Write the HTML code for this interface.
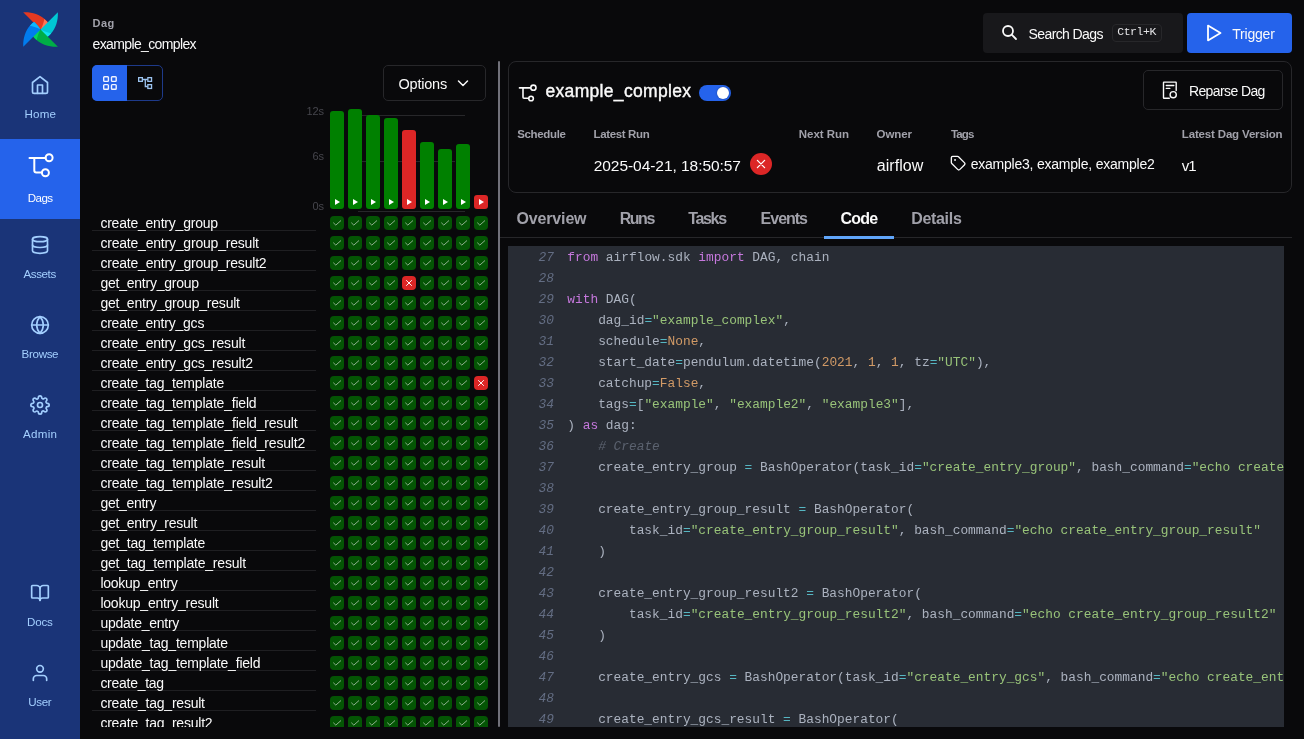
<!DOCTYPE html>
<html><head><meta charset="utf-8"><title>example_complex - Airflow</title>
<style>html,body{margin:0;padding:0;background:#09090b;width:1304px;height:739px;overflow:hidden;position:relative}</style>
</head><body>
<div style="position:absolute;left:0;top:0;width:1304px;height:739px;overflow:hidden;will-change:transform">
<div style="position:absolute;left:0;top:0;width:80px;height:739px;background:#1a3478"></div><svg style="position:absolute;left:20px;top:9px" width="41" height="41" viewBox="-20.55 -20.5 41 41"><g transform="rotate(0)"><path d="M0 0 L-17.35 -17.3 C-9 -17.8 -1 -15 4 -10.5 C6 -8.7 7.6 -7 7.6 -6.2 C5 -3.5 2.5 -1.5 0 0 Z" fill="#e43921"/><path d="M0.3 -0.3 C2.2 -4 3.3 -8 3.8 -10.6 C6 -8.7 7.6 -7 7.6 -6.2 C5 -3.5 2.5 -1.5 0.3 -0.3 Z" fill="#ff7557"/></g><g transform="rotate(90)"><path d="M0 0 L-17.35 -17.3 C-9 -17.8 -1 -15 4 -10.5 C6 -8.7 7.6 -7 7.6 -6.2 C5 -3.5 2.5 -1.5 0 0 Z" fill="#00c7d4"/><path d="M0.3 -0.3 C2.2 -4 3.3 -8 3.8 -10.6 C6 -8.7 7.6 -7 7.6 -6.2 C5 -3.5 2.5 -1.5 0.3 -0.3 Z" fill="#11e1ee"/></g><g transform="rotate(180)"><path d="M0 0 L-17.35 -17.3 C-9 -17.8 -1 -15 4 -10.5 C6 -8.7 7.6 -7 7.6 -6.2 C5 -3.5 2.5 -1.5 0 0 Z" fill="#00ad46"/><path d="M0.3 -0.3 C2.2 -4 3.3 -8 3.8 -10.6 C6 -8.7 7.6 -7 7.6 -6.2 C5 -3.5 2.5 -1.5 0.3 -0.3 Z" fill="#04d659"/></g><g transform="rotate(270)"><path d="M0 0 L-17.35 -17.3 C-9 -17.8 -1 -15 4 -10.5 C6 -8.7 7.6 -7 7.6 -6.2 C5 -3.5 2.5 -1.5 0 0 Z" fill="#017cee"/><path d="M0.3 -0.3 C2.2 -4 3.3 -8 3.8 -10.6 C6 -8.7 7.6 -7 7.6 -6.2 C5 -3.5 2.5 -1.5 0.3 -0.3 Z" fill="#0cb6ff"/></g></svg><div style="position:absolute;left:0;top:59px;width:80px;height:80px;background:transparent"><svg style="position:absolute;left:30.0px;top:16.0px" width="20" height="20" viewBox="0 0 24 24" overflow="visible" fill="none" stroke="#a3cfff" stroke-width="2" stroke-linecap="round" stroke-linejoin="round"><path d="M3 9l9-7 9 7v11a2 2 0 0 1-2 2H5a2 2 0 0 1-2-2z"/><polyline points="9 22 9 12 15 12 15 22"/></svg></div><div style="position:absolute;left:24.55px;top:108.08px;font:normal 11.6px/11.6px 'Liberation Sans', sans-serif;letter-spacing:0.170px;color:#a3cfff;white-space:nowrap;">Home</div><div style="position:absolute;left:0;top:139px;width:80px;height:80px;background:#2563eb"><svg style="position:absolute;left:28.0px;top:14.0px" width="24" height="24" viewBox="0 0 24 24" overflow="visible" fill="none" stroke="#ffffff" stroke-width="2" stroke-linecap="round" stroke-linejoin="round"><path d="M1.5 4.9 H17.6"/><circle cx="21.1" cy="4.75" r="3.5"/><path d="M6.3 4.9 V17.5 a2 2 0 0 0 2 2 H13.9"/><circle cx="17.4" cy="19.7" r="3.5"/></svg></div><div style="position:absolute;left:27.70px;top:191.98px;font:normal 11.6px/11.6px 'Liberation Sans', sans-serif;letter-spacing:-0.560px;color:#ffffff;white-space:nowrap;">Dags</div><div style="position:absolute;left:0;top:219px;width:80px;height:80px;background:transparent"><svg style="position:absolute;left:30.0px;top:16.0px" width="20" height="20" viewBox="0 0 24 24" overflow="visible" fill="none" stroke="#a3cfff" stroke-width="2" stroke-linecap="round" stroke-linejoin="round"><ellipse cx="12" cy="5" rx="9" ry="3"/><path d="M21 12c0 1.66-4 3-9 3s-9-1.34-9-3"/><path d="M3 5v14c0 1.66 4 3 9 3s9-1.34 9-3V5"/></svg></div><div style="position:absolute;left:23.50px;top:267.68px;font:normal 11.6px/11.6px 'Liberation Sans', sans-serif;letter-spacing:-0.422px;color:#a3cfff;white-space:nowrap;">Assets</div><div style="position:absolute;left:0;top:299px;width:80px;height:80px;background:transparent"><svg style="position:absolute;left:30.0px;top:16.0px" width="20" height="20" viewBox="0 0 24 24" overflow="visible" fill="none" stroke="#a3cfff" stroke-width="2" stroke-linecap="round" stroke-linejoin="round"><circle cx="12" cy="12" r="10"/><line x1="2" y1="12" x2="22" y2="12"/><path d="M12 2a15.3 15.3 0 0 1 4 10 15.3 15.3 0 0 1-4 10 15.3 15.3 0 0 1-4-10 15.3 15.3 0 0 1 4-10z"/></svg></div><div style="position:absolute;left:21.60px;top:347.68px;font:normal 11.6px/11.6px 'Liberation Sans', sans-serif;letter-spacing:-0.336px;color:#a3cfff;white-space:nowrap;">Browse</div><div style="position:absolute;left:0;top:379px;width:80px;height:80px;background:transparent"><svg style="position:absolute;left:30.0px;top:16.0px" width="20" height="20" viewBox="0 0 24 24" overflow="visible" fill="none" stroke="#a3cfff" stroke-width="2" stroke-linecap="round" stroke-linejoin="round"><circle cx="12" cy="12" r="3"/><path d="M19.4 15a1.65 1.65 0 0 0 .33 1.82l.06.06a2 2 0 0 1 0 2.83 2 2 0 0 1-2.83 0l-.06-.06a1.65 1.65 0 0 0-1.82-.33 1.65 1.65 0 0 0-1 1.51V21a2 2 0 0 1-2 2 2 2 0 0 1-2-2v-.09A1.65 1.65 0 0 0 9 19.4a1.65 1.65 0 0 0-1.820.33l-.06.06a2 2 0 0 1-2.83 0 2 2 0 0 1 0-2.83l.06-.06a1.65 1.65 0 0 0 .33-1.82 1.65 1.65 0 0 0-1.51-1H3a2 2 0 0 1-2-2 2 2 0 0 1 2-2h.09A1.65 1.65 0 0 0 4.6 9a1.65 1.65 0 0 0-.33-1.82l-.06-.06a2 2 0 0 1 0-2.83 2 2 0 0 1 2.83 0l.06.06a1.65 1.65 0 0 0 1.82.33H9a1.65 1.65 0 0 0 1-1.51V3a2 2 0 0 1 2-2 2 2 0 0 1 2 2v.09a1.65 1.65 0 0 0 1 1.51 1.65 1.65 0 0 0 1.82-.33l.06-.06a2 2 0 0 1 2.83 0 2 2 0 0 1 0 2.83l-.06.06a1.65 1.65 0 0 0-.33 1.82V9a1.65 1.65 0 0 0 1.51 1H21a2 2 0 0 1 2 2 2 2 0 0 1-2 2h-.09a1.65 1.65 0 0 0-1.51 1z"/></svg></div><div style="position:absolute;left:23.00px;top:427.78px;font:normal 11.6px/11.6px 'Liberation Sans', sans-serif;letter-spacing:0.280px;color:#a3cfff;white-space:nowrap;">Admin</div><div style="position:absolute;left:0;top:567px;width:80px;height:80px;background:transparent"><svg style="position:absolute;left:30.0px;top:15.8px" width="20" height="20" viewBox="0 0 24 24" overflow="visible" fill="none" stroke="#a3cfff" stroke-width="2" stroke-linecap="round" stroke-linejoin="round"><path d="M12 7v14"/><path d="M3 18a1 1 0 0 1-1-1V4a1 1 0 0 1 1-1h5a4 4 0 0 1 4 4 4 4 0 0 1 4-4h5a1 1 0 0 1 1 1v13a1 1 0 0 1-1 1h-6a3 3 0 0 0-3 3 3 3 0 0 0-3-3z"/></svg></div><div style="position:absolute;left:27.10px;top:615.88px;font:normal 11.6px/11.6px 'Liberation Sans', sans-serif;letter-spacing:-0.243px;color:#a3cfff;white-space:nowrap;">Docs</div><div style="position:absolute;left:0;top:647px;width:80px;height:80px;background:transparent"><svg style="position:absolute;left:30.0px;top:16.0px" width="20" height="20" viewBox="0 0 24 24" overflow="visible" fill="none" stroke="#a3cfff" stroke-width="2" stroke-linecap="round" stroke-linejoin="round"><path d="M20 21v-2a4 4 0 0 0-4-4H8a4 4 0 0 0-4 4v2"/><circle cx="12" cy="7" r="4"/></svg></div><div style="position:absolute;left:28.30px;top:695.78px;font:normal 11.6px/11.6px 'Liberation Sans', sans-serif;letter-spacing:-0.397px;color:#a3cfff;white-space:nowrap;">User</div><div style="position:absolute;left:92.60px;top:17.59px;font:bold 11px/11px 'Liberation Sans', sans-serif;letter-spacing:0.409px;color:#a1a1aa;white-space:nowrap;">Dag</div><div style="position:absolute;left:92.60px;top:36.95px;font:normal 14px/14px 'Liberation Sans', sans-serif;letter-spacing:-0.631px;color:#fafafa;white-space:nowrap;">example_complex</div><div style="position:absolute;left:92px;top:65px;width:71px;height:36px;box-sizing:border-box;border:1px solid #1e3a8a;border-radius:5px"></div><div style="position:absolute;left:92px;top:65px;width:35.3px;height:36px;background:#2563eb;border-radius:5px 0 0 5px"></div><svg style="position:absolute;left:103px;top:76px" width="14" height="14" viewBox="0 0 14 14" fill="none" stroke="#eef2ff" stroke-width="1.4"><rect x="0.7" y="0.7" width="4.7" height="4.7" rx="0.8"/><rect x="8.5" y="0.7" width="4.7" height="4.7" rx="0.8"/><rect x="0.7" y="8.6" width="4.7" height="4.7" rx="0.8"/><rect x="8.5" y="8.6" width="4.7" height="4.7" rx="0.8"/></svg><svg style="position:absolute;left:138px;top:77px" width="15" height="13" viewBox="0 0 15 13" fill="none" stroke="#9cc3ef" stroke-width="1.3"><rect x="0.65" y="0.65" width="3.7" height="3.7"/><rect x="9.85" y="0.65" width="3.7" height="3.7"/><rect x="9.85" y="7.65" width="3.7" height="3.8"/><path d="M4.4 2.5 H9.8 M7.3 2.5 V9.5 H9.8"/></svg><div style="position:absolute;left:383px;top:65px;width:103px;height:36px;box-sizing:border-box;border:1px solid #27272a;border-radius:5px"></div><div style="position:absolute;left:398.50px;top:76.93px;font:normal 14.5px/14.5px 'Liberation Sans', sans-serif;letter-spacing:-0.212px;color:#fafafa;white-space:nowrap;">Options</div><svg style="position:absolute;left:457px;top:79px" width="12" height="9" viewBox="0 0 12 9" fill="none" stroke="#fafafa" stroke-width="1.5" stroke-linecap="round" stroke-linejoin="round"><path d="M1.5 2 L6 6.5 L10.5 2"/></svg><div style="position:absolute;left:306.50px;top:105.79px;font:normal 11px/11px 'Liberation Sans', sans-serif;letter-spacing:-0.068px;color:#46464d;white-space:nowrap;">12s</div><div style="position:absolute;left:312.50px;top:151.39px;font:normal 11px/11px 'Liberation Sans', sans-serif;letter-spacing:-0.018px;color:#46464d;white-space:nowrap;">6s</div><div style="position:absolute;left:312.50px;top:201.49px;font:normal 11px/11px 'Liberation Sans', sans-serif;letter-spacing:-0.018px;color:#46464d;white-space:nowrap;">0s</div><div style="position:absolute;left:362px;top:115px;width:103px;height:1px;background:#27272a"></div><div style="position:absolute;left:362px;top:161px;width:93px;height:1px;background:#27272a"></div><div style="position:absolute;left:358px;top:211px;width:107px;height:1px;background:#27272a"></div><div style="position:absolute;left:330px;top:111px;width:14px;height:98.0px;background:#008000;border-radius:3px"></div><svg style="position:absolute;left:334px;top:198px" width="7" height="8" viewBox="0 0 7 8"><path d="M1 1 L6 4 L1 7 Z" fill="#fff"/></svg><div style="position:absolute;left:348px;top:108.7px;width:14px;height:100.3px;background:#008000;border-radius:3px"></div><svg style="position:absolute;left:352px;top:198px" width="7" height="8" viewBox="0 0 7 8"><path d="M1 1 L6 4 L1 7 Z" fill="#fff"/></svg><div style="position:absolute;left:366px;top:114.8px;width:14px;height:94.2px;background:#008000;border-radius:3px"></div><svg style="position:absolute;left:370px;top:198px" width="7" height="8" viewBox="0 0 7 8"><path d="M1 1 L6 4 L1 7 Z" fill="#fff"/></svg><div style="position:absolute;left:384px;top:118px;width:14px;height:91.0px;background:#008000;border-radius:3px"></div><svg style="position:absolute;left:388px;top:198px" width="7" height="8" viewBox="0 0 7 8"><path d="M1 1 L6 4 L1 7 Z" fill="#fff"/></svg><div style="position:absolute;left:402px;top:130px;width:14px;height:79.0px;background:#dc2626;border-radius:3px"></div><svg style="position:absolute;left:406px;top:198px" width="7" height="8" viewBox="0 0 7 8"><path d="M1 1 L6 4 L1 7 Z" fill="#fff"/></svg><div style="position:absolute;left:420px;top:142px;width:14px;height:67.0px;background:#008000;border-radius:3px"></div><svg style="position:absolute;left:424px;top:198px" width="7" height="8" viewBox="0 0 7 8"><path d="M1 1 L6 4 L1 7 Z" fill="#fff"/></svg><div style="position:absolute;left:438px;top:149px;width:14px;height:60.0px;background:#008000;border-radius:3px"></div><svg style="position:absolute;left:442px;top:198px" width="7" height="8" viewBox="0 0 7 8"><path d="M1 1 L6 4 L1 7 Z" fill="#fff"/></svg><div style="position:absolute;left:456px;top:144px;width:14px;height:65.0px;background:#008000;border-radius:3px"></div><svg style="position:absolute;left:460px;top:198px" width="7" height="8" viewBox="0 0 7 8"><path d="M1 1 L6 4 L1 7 Z" fill="#fff"/></svg><div style="position:absolute;left:474px;top:194.7px;width:14px;height:14.3px;background:#dc2626;border-radius:3px"></div><svg style="position:absolute;left:478px;top:198px" width="7" height="8" viewBox="0 0 7 8"><path d="M1 1 L6 4 L1 7 Z" fill="#fff"/></svg><div style="position:absolute;left:0;top:0;width:498px;height:727px;overflow:hidden"><div style="position:absolute;left:92px;top:230px;width:224px;height:1px;background:#1f1f22"></div><div style="position:absolute;left:100.40px;top:216.45px;font:normal 14px/14px 'Liberation Sans', sans-serif;letter-spacing:-0.219px;color:#fafafa;white-space:nowrap;">create_entry_group</div><div style="position:absolute;left:330px;top:216px;width:14px;height:14px;background:#045504;border-radius:4px"><svg style="position:absolute;left:0;top:0" width="14" height="14" viewBox="0 0 14 14" fill="none" stroke="#9cb89c" stroke-width="0.9"><path d="M3.3 6.7 L5.8 9.1 L11 4.5"/></svg></div><div style="position:absolute;left:348px;top:216px;width:14px;height:14px;background:#045504;border-radius:4px"><svg style="position:absolute;left:0;top:0" width="14" height="14" viewBox="0 0 14 14" fill="none" stroke="#9cb89c" stroke-width="0.9"><path d="M3.3 6.7 L5.8 9.1 L11 4.5"/></svg></div><div style="position:absolute;left:366px;top:216px;width:14px;height:14px;background:#045504;border-radius:4px"><svg style="position:absolute;left:0;top:0" width="14" height="14" viewBox="0 0 14 14" fill="none" stroke="#9cb89c" stroke-width="0.9"><path d="M3.3 6.7 L5.8 9.1 L11 4.5"/></svg></div><div style="position:absolute;left:384px;top:216px;width:14px;height:14px;background:#045504;border-radius:4px"><svg style="position:absolute;left:0;top:0" width="14" height="14" viewBox="0 0 14 14" fill="none" stroke="#9cb89c" stroke-width="0.9"><path d="M3.3 6.7 L5.8 9.1 L11 4.5"/></svg></div><div style="position:absolute;left:402px;top:216px;width:14px;height:14px;background:#045504;border-radius:4px"><svg style="position:absolute;left:0;top:0" width="14" height="14" viewBox="0 0 14 14" fill="none" stroke="#9cb89c" stroke-width="0.9"><path d="M3.3 6.7 L5.8 9.1 L11 4.5"/></svg></div><div style="position:absolute;left:420px;top:216px;width:14px;height:14px;background:#045504;border-radius:4px"><svg style="position:absolute;left:0;top:0" width="14" height="14" viewBox="0 0 14 14" fill="none" stroke="#9cb89c" stroke-width="0.9"><path d="M3.3 6.7 L5.8 9.1 L11 4.5"/></svg></div><div style="position:absolute;left:438px;top:216px;width:14px;height:14px;background:#045504;border-radius:4px"><svg style="position:absolute;left:0;top:0" width="14" height="14" viewBox="0 0 14 14" fill="none" stroke="#9cb89c" stroke-width="0.9"><path d="M3.3 6.7 L5.8 9.1 L11 4.5"/></svg></div><div style="position:absolute;left:456px;top:216px;width:14px;height:14px;background:#045504;border-radius:4px"><svg style="position:absolute;left:0;top:0" width="14" height="14" viewBox="0 0 14 14" fill="none" stroke="#9cb89c" stroke-width="0.9"><path d="M3.3 6.7 L5.8 9.1 L11 4.5"/></svg></div><div style="position:absolute;left:474px;top:216px;width:14px;height:14px;background:#045504;border-radius:4px"><svg style="position:absolute;left:0;top:0" width="14" height="14" viewBox="0 0 14 14" fill="none" stroke="#9cb89c" stroke-width="0.9"><path d="M3.3 6.7 L5.8 9.1 L11 4.5"/></svg></div><div style="position:absolute;left:92px;top:250px;width:224px;height:1px;background:#1f1f22"></div><div style="position:absolute;left:100.40px;top:236.45px;font:normal 14px/14px 'Liberation Sans', sans-serif;letter-spacing:-0.202px;color:#fafafa;white-space:nowrap;">create_entry_group_result</div><div style="position:absolute;left:330px;top:236px;width:14px;height:14px;background:#045504;border-radius:4px"><svg style="position:absolute;left:0;top:0" width="14" height="14" viewBox="0 0 14 14" fill="none" stroke="#9cb89c" stroke-width="0.9"><path d="M3.3 6.7 L5.8 9.1 L11 4.5"/></svg></div><div style="position:absolute;left:348px;top:236px;width:14px;height:14px;background:#045504;border-radius:4px"><svg style="position:absolute;left:0;top:0" width="14" height="14" viewBox="0 0 14 14" fill="none" stroke="#9cb89c" stroke-width="0.9"><path d="M3.3 6.7 L5.8 9.1 L11 4.5"/></svg></div><div style="position:absolute;left:366px;top:236px;width:14px;height:14px;background:#045504;border-radius:4px"><svg style="position:absolute;left:0;top:0" width="14" height="14" viewBox="0 0 14 14" fill="none" stroke="#9cb89c" stroke-width="0.9"><path d="M3.3 6.7 L5.8 9.1 L11 4.5"/></svg></div><div style="position:absolute;left:384px;top:236px;width:14px;height:14px;background:#045504;border-radius:4px"><svg style="position:absolute;left:0;top:0" width="14" height="14" viewBox="0 0 14 14" fill="none" stroke="#9cb89c" stroke-width="0.9"><path d="M3.3 6.7 L5.8 9.1 L11 4.5"/></svg></div><div style="position:absolute;left:402px;top:236px;width:14px;height:14px;background:#045504;border-radius:4px"><svg style="position:absolute;left:0;top:0" width="14" height="14" viewBox="0 0 14 14" fill="none" stroke="#9cb89c" stroke-width="0.9"><path d="M3.3 6.7 L5.8 9.1 L11 4.5"/></svg></div><div style="position:absolute;left:420px;top:236px;width:14px;height:14px;background:#045504;border-radius:4px"><svg style="position:absolute;left:0;top:0" width="14" height="14" viewBox="0 0 14 14" fill="none" stroke="#9cb89c" stroke-width="0.9"><path d="M3.3 6.7 L5.8 9.1 L11 4.5"/></svg></div><div style="position:absolute;left:438px;top:236px;width:14px;height:14px;background:#045504;border-radius:4px"><svg style="position:absolute;left:0;top:0" width="14" height="14" viewBox="0 0 14 14" fill="none" stroke="#9cb89c" stroke-width="0.9"><path d="M3.3 6.7 L5.8 9.1 L11 4.5"/></svg></div><div style="position:absolute;left:456px;top:236px;width:14px;height:14px;background:#045504;border-radius:4px"><svg style="position:absolute;left:0;top:0" width="14" height="14" viewBox="0 0 14 14" fill="none" stroke="#9cb89c" stroke-width="0.9"><path d="M3.3 6.7 L5.8 9.1 L11 4.5"/></svg></div><div style="position:absolute;left:474px;top:236px;width:14px;height:14px;background:#045504;border-radius:4px"><svg style="position:absolute;left:0;top:0" width="14" height="14" viewBox="0 0 14 14" fill="none" stroke="#9cb89c" stroke-width="0.9"><path d="M3.3 6.7 L5.8 9.1 L11 4.5"/></svg></div><div style="position:absolute;left:92px;top:270px;width:224px;height:1px;background:#1f1f22"></div><div style="position:absolute;left:100.40px;top:256.45px;font:normal 14px/14px 'Liberation Sans', sans-serif;letter-spacing:-0.200px;color:#fafafa;white-space:nowrap;">create_entry_group_result2</div><div style="position:absolute;left:330px;top:256px;width:14px;height:14px;background:#045504;border-radius:4px"><svg style="position:absolute;left:0;top:0" width="14" height="14" viewBox="0 0 14 14" fill="none" stroke="#9cb89c" stroke-width="0.9"><path d="M3.3 6.7 L5.8 9.1 L11 4.5"/></svg></div><div style="position:absolute;left:348px;top:256px;width:14px;height:14px;background:#045504;border-radius:4px"><svg style="position:absolute;left:0;top:0" width="14" height="14" viewBox="0 0 14 14" fill="none" stroke="#9cb89c" stroke-width="0.9"><path d="M3.3 6.7 L5.8 9.1 L11 4.5"/></svg></div><div style="position:absolute;left:366px;top:256px;width:14px;height:14px;background:#045504;border-radius:4px"><svg style="position:absolute;left:0;top:0" width="14" height="14" viewBox="0 0 14 14" fill="none" stroke="#9cb89c" stroke-width="0.9"><path d="M3.3 6.7 L5.8 9.1 L11 4.5"/></svg></div><div style="position:absolute;left:384px;top:256px;width:14px;height:14px;background:#045504;border-radius:4px"><svg style="position:absolute;left:0;top:0" width="14" height="14" viewBox="0 0 14 14" fill="none" stroke="#9cb89c" stroke-width="0.9"><path d="M3.3 6.7 L5.8 9.1 L11 4.5"/></svg></div><div style="position:absolute;left:402px;top:256px;width:14px;height:14px;background:#045504;border-radius:4px"><svg style="position:absolute;left:0;top:0" width="14" height="14" viewBox="0 0 14 14" fill="none" stroke="#9cb89c" stroke-width="0.9"><path d="M3.3 6.7 L5.8 9.1 L11 4.5"/></svg></div><div style="position:absolute;left:420px;top:256px;width:14px;height:14px;background:#045504;border-radius:4px"><svg style="position:absolute;left:0;top:0" width="14" height="14" viewBox="0 0 14 14" fill="none" stroke="#9cb89c" stroke-width="0.9"><path d="M3.3 6.7 L5.8 9.1 L11 4.5"/></svg></div><div style="position:absolute;left:438px;top:256px;width:14px;height:14px;background:#045504;border-radius:4px"><svg style="position:absolute;left:0;top:0" width="14" height="14" viewBox="0 0 14 14" fill="none" stroke="#9cb89c" stroke-width="0.9"><path d="M3.3 6.7 L5.8 9.1 L11 4.5"/></svg></div><div style="position:absolute;left:456px;top:256px;width:14px;height:14px;background:#045504;border-radius:4px"><svg style="position:absolute;left:0;top:0" width="14" height="14" viewBox="0 0 14 14" fill="none" stroke="#9cb89c" stroke-width="0.9"><path d="M3.3 6.7 L5.8 9.1 L11 4.5"/></svg></div><div style="position:absolute;left:474px;top:256px;width:14px;height:14px;background:#045504;border-radius:4px"><svg style="position:absolute;left:0;top:0" width="14" height="14" viewBox="0 0 14 14" fill="none" stroke="#9cb89c" stroke-width="0.9"><path d="M3.3 6.7 L5.8 9.1 L11 4.5"/></svg></div><div style="position:absolute;left:92px;top:290px;width:224px;height:1px;background:#1f1f22"></div><div style="position:absolute;left:100.40px;top:276.45px;font:normal 14px/14px 'Liberation Sans', sans-serif;letter-spacing:-0.231px;color:#fafafa;white-space:nowrap;">get_entry_group</div><div style="position:absolute;left:330px;top:276px;width:14px;height:14px;background:#045504;border-radius:4px"><svg style="position:absolute;left:0;top:0" width="14" height="14" viewBox="0 0 14 14" fill="none" stroke="#9cb89c" stroke-width="0.9"><path d="M3.3 6.7 L5.8 9.1 L11 4.5"/></svg></div><div style="position:absolute;left:348px;top:276px;width:14px;height:14px;background:#045504;border-radius:4px"><svg style="position:absolute;left:0;top:0" width="14" height="14" viewBox="0 0 14 14" fill="none" stroke="#9cb89c" stroke-width="0.9"><path d="M3.3 6.7 L5.8 9.1 L11 4.5"/></svg></div><div style="position:absolute;left:366px;top:276px;width:14px;height:14px;background:#045504;border-radius:4px"><svg style="position:absolute;left:0;top:0" width="14" height="14" viewBox="0 0 14 14" fill="none" stroke="#9cb89c" stroke-width="0.9"><path d="M3.3 6.7 L5.8 9.1 L11 4.5"/></svg></div><div style="position:absolute;left:384px;top:276px;width:14px;height:14px;background:#045504;border-radius:4px"><svg style="position:absolute;left:0;top:0" width="14" height="14" viewBox="0 0 14 14" fill="none" stroke="#9cb89c" stroke-width="0.9"><path d="M3.3 6.7 L5.8 9.1 L11 4.5"/></svg></div><div style="position:absolute;left:402px;top:276px;width:14px;height:14px;background:#dc2626;border-radius:4px"><svg style="position:absolute;left:0;top:0" width="14" height="14" viewBox="0 0 14 14" fill="none" stroke="#fff" stroke-width="0.95"><path d="M4.2 4.2 L9.8 9.8 M9.8 4.2 L4.2 9.8"/></svg></div><div style="position:absolute;left:420px;top:276px;width:14px;height:14px;background:#045504;border-radius:4px"><svg style="position:absolute;left:0;top:0" width="14" height="14" viewBox="0 0 14 14" fill="none" stroke="#9cb89c" stroke-width="0.9"><path d="M3.3 6.7 L5.8 9.1 L11 4.5"/></svg></div><div style="position:absolute;left:438px;top:276px;width:14px;height:14px;background:#045504;border-radius:4px"><svg style="position:absolute;left:0;top:0" width="14" height="14" viewBox="0 0 14 14" fill="none" stroke="#9cb89c" stroke-width="0.9"><path d="M3.3 6.7 L5.8 9.1 L11 4.5"/></svg></div><div style="position:absolute;left:456px;top:276px;width:14px;height:14px;background:#045504;border-radius:4px"><svg style="position:absolute;left:0;top:0" width="14" height="14" viewBox="0 0 14 14" fill="none" stroke="#9cb89c" stroke-width="0.9"><path d="M3.3 6.7 L5.8 9.1 L11 4.5"/></svg></div><div style="position:absolute;left:474px;top:276px;width:14px;height:14px;background:#045504;border-radius:4px"><svg style="position:absolute;left:0;top:0" width="14" height="14" viewBox="0 0 14 14" fill="none" stroke="#9cb89c" stroke-width="0.9"><path d="M3.3 6.7 L5.8 9.1 L11 4.5"/></svg></div><div style="position:absolute;left:92px;top:310px;width:224px;height:1px;background:#1f1f22"></div><div style="position:absolute;left:100.40px;top:296.45px;font:normal 14px/14px 'Liberation Sans', sans-serif;letter-spacing:-0.208px;color:#fafafa;white-space:nowrap;">get_entry_group_result</div><div style="position:absolute;left:330px;top:296px;width:14px;height:14px;background:#045504;border-radius:4px"><svg style="position:absolute;left:0;top:0" width="14" height="14" viewBox="0 0 14 14" fill="none" stroke="#9cb89c" stroke-width="0.9"><path d="M3.3 6.7 L5.8 9.1 L11 4.5"/></svg></div><div style="position:absolute;left:348px;top:296px;width:14px;height:14px;background:#045504;border-radius:4px"><svg style="position:absolute;left:0;top:0" width="14" height="14" viewBox="0 0 14 14" fill="none" stroke="#9cb89c" stroke-width="0.9"><path d="M3.3 6.7 L5.8 9.1 L11 4.5"/></svg></div><div style="position:absolute;left:366px;top:296px;width:14px;height:14px;background:#045504;border-radius:4px"><svg style="position:absolute;left:0;top:0" width="14" height="14" viewBox="0 0 14 14" fill="none" stroke="#9cb89c" stroke-width="0.9"><path d="M3.3 6.7 L5.8 9.1 L11 4.5"/></svg></div><div style="position:absolute;left:384px;top:296px;width:14px;height:14px;background:#045504;border-radius:4px"><svg style="position:absolute;left:0;top:0" width="14" height="14" viewBox="0 0 14 14" fill="none" stroke="#9cb89c" stroke-width="0.9"><path d="M3.3 6.7 L5.8 9.1 L11 4.5"/></svg></div><div style="position:absolute;left:402px;top:296px;width:14px;height:14px;background:#045504;border-radius:4px"><svg style="position:absolute;left:0;top:0" width="14" height="14" viewBox="0 0 14 14" fill="none" stroke="#9cb89c" stroke-width="0.9"><path d="M3.3 6.7 L5.8 9.1 L11 4.5"/></svg></div><div style="position:absolute;left:420px;top:296px;width:14px;height:14px;background:#045504;border-radius:4px"><svg style="position:absolute;left:0;top:0" width="14" height="14" viewBox="0 0 14 14" fill="none" stroke="#9cb89c" stroke-width="0.9"><path d="M3.3 6.7 L5.8 9.1 L11 4.5"/></svg></div><div style="position:absolute;left:438px;top:296px;width:14px;height:14px;background:#045504;border-radius:4px"><svg style="position:absolute;left:0;top:0" width="14" height="14" viewBox="0 0 14 14" fill="none" stroke="#9cb89c" stroke-width="0.9"><path d="M3.3 6.7 L5.8 9.1 L11 4.5"/></svg></div><div style="position:absolute;left:456px;top:296px;width:14px;height:14px;background:#045504;border-radius:4px"><svg style="position:absolute;left:0;top:0" width="14" height="14" viewBox="0 0 14 14" fill="none" stroke="#9cb89c" stroke-width="0.9"><path d="M3.3 6.7 L5.8 9.1 L11 4.5"/></svg></div><div style="position:absolute;left:474px;top:296px;width:14px;height:14px;background:#045504;border-radius:4px"><svg style="position:absolute;left:0;top:0" width="14" height="14" viewBox="0 0 14 14" fill="none" stroke="#9cb89c" stroke-width="0.9"><path d="M3.3 6.7 L5.8 9.1 L11 4.5"/></svg></div><div style="position:absolute;left:92px;top:330px;width:224px;height:1px;background:#1f1f22"></div><div style="position:absolute;left:100.40px;top:316.45px;font:normal 14px/14px 'Liberation Sans', sans-serif;letter-spacing:-0.227px;color:#fafafa;white-space:nowrap;">create_entry_gcs</div><div style="position:absolute;left:330px;top:316px;width:14px;height:14px;background:#045504;border-radius:4px"><svg style="position:absolute;left:0;top:0" width="14" height="14" viewBox="0 0 14 14" fill="none" stroke="#9cb89c" stroke-width="0.9"><path d="M3.3 6.7 L5.8 9.1 L11 4.5"/></svg></div><div style="position:absolute;left:348px;top:316px;width:14px;height:14px;background:#045504;border-radius:4px"><svg style="position:absolute;left:0;top:0" width="14" height="14" viewBox="0 0 14 14" fill="none" stroke="#9cb89c" stroke-width="0.9"><path d="M3.3 6.7 L5.8 9.1 L11 4.5"/></svg></div><div style="position:absolute;left:366px;top:316px;width:14px;height:14px;background:#045504;border-radius:4px"><svg style="position:absolute;left:0;top:0" width="14" height="14" viewBox="0 0 14 14" fill="none" stroke="#9cb89c" stroke-width="0.9"><path d="M3.3 6.7 L5.8 9.1 L11 4.5"/></svg></div><div style="position:absolute;left:384px;top:316px;width:14px;height:14px;background:#045504;border-radius:4px"><svg style="position:absolute;left:0;top:0" width="14" height="14" viewBox="0 0 14 14" fill="none" stroke="#9cb89c" stroke-width="0.9"><path d="M3.3 6.7 L5.8 9.1 L11 4.5"/></svg></div><div style="position:absolute;left:402px;top:316px;width:14px;height:14px;background:#045504;border-radius:4px"><svg style="position:absolute;left:0;top:0" width="14" height="14" viewBox="0 0 14 14" fill="none" stroke="#9cb89c" stroke-width="0.9"><path d="M3.3 6.7 L5.8 9.1 L11 4.5"/></svg></div><div style="position:absolute;left:420px;top:316px;width:14px;height:14px;background:#045504;border-radius:4px"><svg style="position:absolute;left:0;top:0" width="14" height="14" viewBox="0 0 14 14" fill="none" stroke="#9cb89c" stroke-width="0.9"><path d="M3.3 6.7 L5.8 9.1 L11 4.5"/></svg></div><div style="position:absolute;left:438px;top:316px;width:14px;height:14px;background:#045504;border-radius:4px"><svg style="position:absolute;left:0;top:0" width="14" height="14" viewBox="0 0 14 14" fill="none" stroke="#9cb89c" stroke-width="0.9"><path d="M3.3 6.7 L5.8 9.1 L11 4.5"/></svg></div><div style="position:absolute;left:456px;top:316px;width:14px;height:14px;background:#045504;border-radius:4px"><svg style="position:absolute;left:0;top:0" width="14" height="14" viewBox="0 0 14 14" fill="none" stroke="#9cb89c" stroke-width="0.9"><path d="M3.3 6.7 L5.8 9.1 L11 4.5"/></svg></div><div style="position:absolute;left:474px;top:316px;width:14px;height:14px;background:#045504;border-radius:4px"><svg style="position:absolute;left:0;top:0" width="14" height="14" viewBox="0 0 14 14" fill="none" stroke="#9cb89c" stroke-width="0.9"><path d="M3.3 6.7 L5.8 9.1 L11 4.5"/></svg></div><div style="position:absolute;left:92px;top:350px;width:224px;height:1px;background:#1f1f22"></div><div style="position:absolute;left:100.40px;top:336.45px;font:normal 14px/14px 'Liberation Sans', sans-serif;letter-spacing:-0.206px;color:#fafafa;white-space:nowrap;">create_entry_gcs_result</div><div style="position:absolute;left:330px;top:336px;width:14px;height:14px;background:#045504;border-radius:4px"><svg style="position:absolute;left:0;top:0" width="14" height="14" viewBox="0 0 14 14" fill="none" stroke="#9cb89c" stroke-width="0.9"><path d="M3.3 6.7 L5.8 9.1 L11 4.5"/></svg></div><div style="position:absolute;left:348px;top:336px;width:14px;height:14px;background:#045504;border-radius:4px"><svg style="position:absolute;left:0;top:0" width="14" height="14" viewBox="0 0 14 14" fill="none" stroke="#9cb89c" stroke-width="0.9"><path d="M3.3 6.7 L5.8 9.1 L11 4.5"/></svg></div><div style="position:absolute;left:366px;top:336px;width:14px;height:14px;background:#045504;border-radius:4px"><svg style="position:absolute;left:0;top:0" width="14" height="14" viewBox="0 0 14 14" fill="none" stroke="#9cb89c" stroke-width="0.9"><path d="M3.3 6.7 L5.8 9.1 L11 4.5"/></svg></div><div style="position:absolute;left:384px;top:336px;width:14px;height:14px;background:#045504;border-radius:4px"><svg style="position:absolute;left:0;top:0" width="14" height="14" viewBox="0 0 14 14" fill="none" stroke="#9cb89c" stroke-width="0.9"><path d="M3.3 6.7 L5.8 9.1 L11 4.5"/></svg></div><div style="position:absolute;left:402px;top:336px;width:14px;height:14px;background:#045504;border-radius:4px"><svg style="position:absolute;left:0;top:0" width="14" height="14" viewBox="0 0 14 14" fill="none" stroke="#9cb89c" stroke-width="0.9"><path d="M3.3 6.7 L5.8 9.1 L11 4.5"/></svg></div><div style="position:absolute;left:420px;top:336px;width:14px;height:14px;background:#045504;border-radius:4px"><svg style="position:absolute;left:0;top:0" width="14" height="14" viewBox="0 0 14 14" fill="none" stroke="#9cb89c" stroke-width="0.9"><path d="M3.3 6.7 L5.8 9.1 L11 4.5"/></svg></div><div style="position:absolute;left:438px;top:336px;width:14px;height:14px;background:#045504;border-radius:4px"><svg style="position:absolute;left:0;top:0" width="14" height="14" viewBox="0 0 14 14" fill="none" stroke="#9cb89c" stroke-width="0.9"><path d="M3.3 6.7 L5.8 9.1 L11 4.5"/></svg></div><div style="position:absolute;left:456px;top:336px;width:14px;height:14px;background:#045504;border-radius:4px"><svg style="position:absolute;left:0;top:0" width="14" height="14" viewBox="0 0 14 14" fill="none" stroke="#9cb89c" stroke-width="0.9"><path d="M3.3 6.7 L5.8 9.1 L11 4.5"/></svg></div><div style="position:absolute;left:474px;top:336px;width:14px;height:14px;background:#045504;border-radius:4px"><svg style="position:absolute;left:0;top:0" width="14" height="14" viewBox="0 0 14 14" fill="none" stroke="#9cb89c" stroke-width="0.9"><path d="M3.3 6.7 L5.8 9.1 L11 4.5"/></svg></div><div style="position:absolute;left:92px;top:370px;width:224px;height:1px;background:#1f1f22"></div><div style="position:absolute;left:100.40px;top:356.45px;font:normal 14px/14px 'Liberation Sans', sans-serif;letter-spacing:-0.203px;color:#fafafa;white-space:nowrap;">create_entry_gcs_result2</div><div style="position:absolute;left:330px;top:356px;width:14px;height:14px;background:#045504;border-radius:4px"><svg style="position:absolute;left:0;top:0" width="14" height="14" viewBox="0 0 14 14" fill="none" stroke="#9cb89c" stroke-width="0.9"><path d="M3.3 6.7 L5.8 9.1 L11 4.5"/></svg></div><div style="position:absolute;left:348px;top:356px;width:14px;height:14px;background:#045504;border-radius:4px"><svg style="position:absolute;left:0;top:0" width="14" height="14" viewBox="0 0 14 14" fill="none" stroke="#9cb89c" stroke-width="0.9"><path d="M3.3 6.7 L5.8 9.1 L11 4.5"/></svg></div><div style="position:absolute;left:366px;top:356px;width:14px;height:14px;background:#045504;border-radius:4px"><svg style="position:absolute;left:0;top:0" width="14" height="14" viewBox="0 0 14 14" fill="none" stroke="#9cb89c" stroke-width="0.9"><path d="M3.3 6.7 L5.8 9.1 L11 4.5"/></svg></div><div style="position:absolute;left:384px;top:356px;width:14px;height:14px;background:#045504;border-radius:4px"><svg style="position:absolute;left:0;top:0" width="14" height="14" viewBox="0 0 14 14" fill="none" stroke="#9cb89c" stroke-width="0.9"><path d="M3.3 6.7 L5.8 9.1 L11 4.5"/></svg></div><div style="position:absolute;left:402px;top:356px;width:14px;height:14px;background:#045504;border-radius:4px"><svg style="position:absolute;left:0;top:0" width="14" height="14" viewBox="0 0 14 14" fill="none" stroke="#9cb89c" stroke-width="0.9"><path d="M3.3 6.7 L5.8 9.1 L11 4.5"/></svg></div><div style="position:absolute;left:420px;top:356px;width:14px;height:14px;background:#045504;border-radius:4px"><svg style="position:absolute;left:0;top:0" width="14" height="14" viewBox="0 0 14 14" fill="none" stroke="#9cb89c" stroke-width="0.9"><path d="M3.3 6.7 L5.8 9.1 L11 4.5"/></svg></div><div style="position:absolute;left:438px;top:356px;width:14px;height:14px;background:#045504;border-radius:4px"><svg style="position:absolute;left:0;top:0" width="14" height="14" viewBox="0 0 14 14" fill="none" stroke="#9cb89c" stroke-width="0.9"><path d="M3.3 6.7 L5.8 9.1 L11 4.5"/></svg></div><div style="position:absolute;left:456px;top:356px;width:14px;height:14px;background:#045504;border-radius:4px"><svg style="position:absolute;left:0;top:0" width="14" height="14" viewBox="0 0 14 14" fill="none" stroke="#9cb89c" stroke-width="0.9"><path d="M3.3 6.7 L5.8 9.1 L11 4.5"/></svg></div><div style="position:absolute;left:474px;top:356px;width:14px;height:14px;background:#045504;border-radius:4px"><svg style="position:absolute;left:0;top:0" width="14" height="14" viewBox="0 0 14 14" fill="none" stroke="#9cb89c" stroke-width="0.9"><path d="M3.3 6.7 L5.8 9.1 L11 4.5"/></svg></div><div style="position:absolute;left:92px;top:390px;width:224px;height:1px;background:#1f1f22"></div><div style="position:absolute;left:100.40px;top:376.45px;font:normal 14px/14px 'Liberation Sans', sans-serif;letter-spacing:-0.215px;color:#fafafa;white-space:nowrap;">create_tag_template</div><div style="position:absolute;left:330px;top:376px;width:14px;height:14px;background:#045504;border-radius:4px"><svg style="position:absolute;left:0;top:0" width="14" height="14" viewBox="0 0 14 14" fill="none" stroke="#9cb89c" stroke-width="0.9"><path d="M3.3 6.7 L5.8 9.1 L11 4.5"/></svg></div><div style="position:absolute;left:348px;top:376px;width:14px;height:14px;background:#045504;border-radius:4px"><svg style="position:absolute;left:0;top:0" width="14" height="14" viewBox="0 0 14 14" fill="none" stroke="#9cb89c" stroke-width="0.9"><path d="M3.3 6.7 L5.8 9.1 L11 4.5"/></svg></div><div style="position:absolute;left:366px;top:376px;width:14px;height:14px;background:#045504;border-radius:4px"><svg style="position:absolute;left:0;top:0" width="14" height="14" viewBox="0 0 14 14" fill="none" stroke="#9cb89c" stroke-width="0.9"><path d="M3.3 6.7 L5.8 9.1 L11 4.5"/></svg></div><div style="position:absolute;left:384px;top:376px;width:14px;height:14px;background:#045504;border-radius:4px"><svg style="position:absolute;left:0;top:0" width="14" height="14" viewBox="0 0 14 14" fill="none" stroke="#9cb89c" stroke-width="0.9"><path d="M3.3 6.7 L5.8 9.1 L11 4.5"/></svg></div><div style="position:absolute;left:402px;top:376px;width:14px;height:14px;background:#045504;border-radius:4px"><svg style="position:absolute;left:0;top:0" width="14" height="14" viewBox="0 0 14 14" fill="none" stroke="#9cb89c" stroke-width="0.9"><path d="M3.3 6.7 L5.8 9.1 L11 4.5"/></svg></div><div style="position:absolute;left:420px;top:376px;width:14px;height:14px;background:#045504;border-radius:4px"><svg style="position:absolute;left:0;top:0" width="14" height="14" viewBox="0 0 14 14" fill="none" stroke="#9cb89c" stroke-width="0.9"><path d="M3.3 6.7 L5.8 9.1 L11 4.5"/></svg></div><div style="position:absolute;left:438px;top:376px;width:14px;height:14px;background:#045504;border-radius:4px"><svg style="position:absolute;left:0;top:0" width="14" height="14" viewBox="0 0 14 14" fill="none" stroke="#9cb89c" stroke-width="0.9"><path d="M3.3 6.7 L5.8 9.1 L11 4.5"/></svg></div><div style="position:absolute;left:456px;top:376px;width:14px;height:14px;background:#045504;border-radius:4px"><svg style="position:absolute;left:0;top:0" width="14" height="14" viewBox="0 0 14 14" fill="none" stroke="#9cb89c" stroke-width="0.9"><path d="M3.3 6.7 L5.8 9.1 L11 4.5"/></svg></div><div style="position:absolute;left:474px;top:376px;width:14px;height:14px;background:#dc2626;border-radius:4px"><svg style="position:absolute;left:0;top:0" width="14" height="14" viewBox="0 0 14 14" fill="none" stroke="#fff" stroke-width="0.95"><path d="M4.2 4.2 L9.8 9.8 M9.8 4.2 L4.2 9.8"/></svg></div><div style="position:absolute;left:92px;top:410px;width:224px;height:1px;background:#1f1f22"></div><div style="position:absolute;left:100.40px;top:396.45px;font:normal 14px/14px 'Liberation Sans', sans-serif;letter-spacing:-0.202px;color:#fafafa;white-space:nowrap;">create_tag_template_field</div><div style="position:absolute;left:330px;top:396px;width:14px;height:14px;background:#045504;border-radius:4px"><svg style="position:absolute;left:0;top:0" width="14" height="14" viewBox="0 0 14 14" fill="none" stroke="#9cb89c" stroke-width="0.9"><path d="M3.3 6.7 L5.8 9.1 L11 4.5"/></svg></div><div style="position:absolute;left:348px;top:396px;width:14px;height:14px;background:#045504;border-radius:4px"><svg style="position:absolute;left:0;top:0" width="14" height="14" viewBox="0 0 14 14" fill="none" stroke="#9cb89c" stroke-width="0.9"><path d="M3.3 6.7 L5.8 9.1 L11 4.5"/></svg></div><div style="position:absolute;left:366px;top:396px;width:14px;height:14px;background:#045504;border-radius:4px"><svg style="position:absolute;left:0;top:0" width="14" height="14" viewBox="0 0 14 14" fill="none" stroke="#9cb89c" stroke-width="0.9"><path d="M3.3 6.7 L5.8 9.1 L11 4.5"/></svg></div><div style="position:absolute;left:384px;top:396px;width:14px;height:14px;background:#045504;border-radius:4px"><svg style="position:absolute;left:0;top:0" width="14" height="14" viewBox="0 0 14 14" fill="none" stroke="#9cb89c" stroke-width="0.9"><path d="M3.3 6.7 L5.8 9.1 L11 4.5"/></svg></div><div style="position:absolute;left:402px;top:396px;width:14px;height:14px;background:#045504;border-radius:4px"><svg style="position:absolute;left:0;top:0" width="14" height="14" viewBox="0 0 14 14" fill="none" stroke="#9cb89c" stroke-width="0.9"><path d="M3.3 6.7 L5.8 9.1 L11 4.5"/></svg></div><div style="position:absolute;left:420px;top:396px;width:14px;height:14px;background:#045504;border-radius:4px"><svg style="position:absolute;left:0;top:0" width="14" height="14" viewBox="0 0 14 14" fill="none" stroke="#9cb89c" stroke-width="0.9"><path d="M3.3 6.7 L5.8 9.1 L11 4.5"/></svg></div><div style="position:absolute;left:438px;top:396px;width:14px;height:14px;background:#045504;border-radius:4px"><svg style="position:absolute;left:0;top:0" width="14" height="14" viewBox="0 0 14 14" fill="none" stroke="#9cb89c" stroke-width="0.9"><path d="M3.3 6.7 L5.8 9.1 L11 4.5"/></svg></div><div style="position:absolute;left:456px;top:396px;width:14px;height:14px;background:#045504;border-radius:4px"><svg style="position:absolute;left:0;top:0" width="14" height="14" viewBox="0 0 14 14" fill="none" stroke="#9cb89c" stroke-width="0.9"><path d="M3.3 6.7 L5.8 9.1 L11 4.5"/></svg></div><div style="position:absolute;left:474px;top:396px;width:14px;height:14px;background:#045504;border-radius:4px"><svg style="position:absolute;left:0;top:0" width="14" height="14" viewBox="0 0 14 14" fill="none" stroke="#9cb89c" stroke-width="0.9"><path d="M3.3 6.7 L5.8 9.1 L11 4.5"/></svg></div><div style="position:absolute;left:92px;top:430px;width:224px;height:1px;background:#1f1f22"></div><div style="position:absolute;left:100.40px;top:416.45px;font:normal 14px/14px 'Liberation Sans', sans-serif;letter-spacing:-0.192px;color:#fafafa;white-space:nowrap;">create_tag_template_field_result</div><div style="position:absolute;left:330px;top:416px;width:14px;height:14px;background:#045504;border-radius:4px"><svg style="position:absolute;left:0;top:0" width="14" height="14" viewBox="0 0 14 14" fill="none" stroke="#9cb89c" stroke-width="0.9"><path d="M3.3 6.7 L5.8 9.1 L11 4.5"/></svg></div><div style="position:absolute;left:348px;top:416px;width:14px;height:14px;background:#045504;border-radius:4px"><svg style="position:absolute;left:0;top:0" width="14" height="14" viewBox="0 0 14 14" fill="none" stroke="#9cb89c" stroke-width="0.9"><path d="M3.3 6.7 L5.8 9.1 L11 4.5"/></svg></div><div style="position:absolute;left:366px;top:416px;width:14px;height:14px;background:#045504;border-radius:4px"><svg style="position:absolute;left:0;top:0" width="14" height="14" viewBox="0 0 14 14" fill="none" stroke="#9cb89c" stroke-width="0.9"><path d="M3.3 6.7 L5.8 9.1 L11 4.5"/></svg></div><div style="position:absolute;left:384px;top:416px;width:14px;height:14px;background:#045504;border-radius:4px"><svg style="position:absolute;left:0;top:0" width="14" height="14" viewBox="0 0 14 14" fill="none" stroke="#9cb89c" stroke-width="0.9"><path d="M3.3 6.7 L5.8 9.1 L11 4.5"/></svg></div><div style="position:absolute;left:402px;top:416px;width:14px;height:14px;background:#045504;border-radius:4px"><svg style="position:absolute;left:0;top:0" width="14" height="14" viewBox="0 0 14 14" fill="none" stroke="#9cb89c" stroke-width="0.9"><path d="M3.3 6.7 L5.8 9.1 L11 4.5"/></svg></div><div style="position:absolute;left:420px;top:416px;width:14px;height:14px;background:#045504;border-radius:4px"><svg style="position:absolute;left:0;top:0" width="14" height="14" viewBox="0 0 14 14" fill="none" stroke="#9cb89c" stroke-width="0.9"><path d="M3.3 6.7 L5.8 9.1 L11 4.5"/></svg></div><div style="position:absolute;left:438px;top:416px;width:14px;height:14px;background:#045504;border-radius:4px"><svg style="position:absolute;left:0;top:0" width="14" height="14" viewBox="0 0 14 14" fill="none" stroke="#9cb89c" stroke-width="0.9"><path d="M3.3 6.7 L5.8 9.1 L11 4.5"/></svg></div><div style="position:absolute;left:456px;top:416px;width:14px;height:14px;background:#045504;border-radius:4px"><svg style="position:absolute;left:0;top:0" width="14" height="14" viewBox="0 0 14 14" fill="none" stroke="#9cb89c" stroke-width="0.9"><path d="M3.3 6.7 L5.8 9.1 L11 4.5"/></svg></div><div style="position:absolute;left:474px;top:416px;width:14px;height:14px;background:#045504;border-radius:4px"><svg style="position:absolute;left:0;top:0" width="14" height="14" viewBox="0 0 14 14" fill="none" stroke="#9cb89c" stroke-width="0.9"><path d="M3.3 6.7 L5.8 9.1 L11 4.5"/></svg></div><div style="position:absolute;left:92px;top:450px;width:224px;height:1px;background:#1f1f22"></div><div style="position:absolute;left:100.40px;top:436.45px;font:normal 14px/14px 'Liberation Sans', sans-serif;letter-spacing:-0.191px;color:#fafafa;white-space:nowrap;">create_tag_template_field_result2</div><div style="position:absolute;left:330px;top:436px;width:14px;height:14px;background:#045504;border-radius:4px"><svg style="position:absolute;left:0;top:0" width="14" height="14" viewBox="0 0 14 14" fill="none" stroke="#9cb89c" stroke-width="0.9"><path d="M3.3 6.7 L5.8 9.1 L11 4.5"/></svg></div><div style="position:absolute;left:348px;top:436px;width:14px;height:14px;background:#045504;border-radius:4px"><svg style="position:absolute;left:0;top:0" width="14" height="14" viewBox="0 0 14 14" fill="none" stroke="#9cb89c" stroke-width="0.9"><path d="M3.3 6.7 L5.8 9.1 L11 4.5"/></svg></div><div style="position:absolute;left:366px;top:436px;width:14px;height:14px;background:#045504;border-radius:4px"><svg style="position:absolute;left:0;top:0" width="14" height="14" viewBox="0 0 14 14" fill="none" stroke="#9cb89c" stroke-width="0.9"><path d="M3.3 6.7 L5.8 9.1 L11 4.5"/></svg></div><div style="position:absolute;left:384px;top:436px;width:14px;height:14px;background:#045504;border-radius:4px"><svg style="position:absolute;left:0;top:0" width="14" height="14" viewBox="0 0 14 14" fill="none" stroke="#9cb89c" stroke-width="0.9"><path d="M3.3 6.7 L5.8 9.1 L11 4.5"/></svg></div><div style="position:absolute;left:402px;top:436px;width:14px;height:14px;background:#045504;border-radius:4px"><svg style="position:absolute;left:0;top:0" width="14" height="14" viewBox="0 0 14 14" fill="none" stroke="#9cb89c" stroke-width="0.9"><path d="M3.3 6.7 L5.8 9.1 L11 4.5"/></svg></div><div style="position:absolute;left:420px;top:436px;width:14px;height:14px;background:#045504;border-radius:4px"><svg style="position:absolute;left:0;top:0" width="14" height="14" viewBox="0 0 14 14" fill="none" stroke="#9cb89c" stroke-width="0.9"><path d="M3.3 6.7 L5.8 9.1 L11 4.5"/></svg></div><div style="position:absolute;left:438px;top:436px;width:14px;height:14px;background:#045504;border-radius:4px"><svg style="position:absolute;left:0;top:0" width="14" height="14" viewBox="0 0 14 14" fill="none" stroke="#9cb89c" stroke-width="0.9"><path d="M3.3 6.7 L5.8 9.1 L11 4.5"/></svg></div><div style="position:absolute;left:456px;top:436px;width:14px;height:14px;background:#045504;border-radius:4px"><svg style="position:absolute;left:0;top:0" width="14" height="14" viewBox="0 0 14 14" fill="none" stroke="#9cb89c" stroke-width="0.9"><path d="M3.3 6.7 L5.8 9.1 L11 4.5"/></svg></div><div style="position:absolute;left:474px;top:436px;width:14px;height:14px;background:#045504;border-radius:4px"><svg style="position:absolute;left:0;top:0" width="14" height="14" viewBox="0 0 14 14" fill="none" stroke="#9cb89c" stroke-width="0.9"><path d="M3.3 6.7 L5.8 9.1 L11 4.5"/></svg></div><div style="position:absolute;left:92px;top:470px;width:224px;height:1px;background:#1f1f22"></div><div style="position:absolute;left:100.40px;top:456.45px;font:normal 14px/14px 'Liberation Sans', sans-serif;letter-spacing:-0.200px;color:#fafafa;white-space:nowrap;">create_tag_template_result</div><div style="position:absolute;left:330px;top:456px;width:14px;height:14px;background:#045504;border-radius:4px"><svg style="position:absolute;left:0;top:0" width="14" height="14" viewBox="0 0 14 14" fill="none" stroke="#9cb89c" stroke-width="0.9"><path d="M3.3 6.7 L5.8 9.1 L11 4.5"/></svg></div><div style="position:absolute;left:348px;top:456px;width:14px;height:14px;background:#045504;border-radius:4px"><svg style="position:absolute;left:0;top:0" width="14" height="14" viewBox="0 0 14 14" fill="none" stroke="#9cb89c" stroke-width="0.9"><path d="M3.3 6.7 L5.8 9.1 L11 4.5"/></svg></div><div style="position:absolute;left:366px;top:456px;width:14px;height:14px;background:#045504;border-radius:4px"><svg style="position:absolute;left:0;top:0" width="14" height="14" viewBox="0 0 14 14" fill="none" stroke="#9cb89c" stroke-width="0.9"><path d="M3.3 6.7 L5.8 9.1 L11 4.5"/></svg></div><div style="position:absolute;left:384px;top:456px;width:14px;height:14px;background:#045504;border-radius:4px"><svg style="position:absolute;left:0;top:0" width="14" height="14" viewBox="0 0 14 14" fill="none" stroke="#9cb89c" stroke-width="0.9"><path d="M3.3 6.7 L5.8 9.1 L11 4.5"/></svg></div><div style="position:absolute;left:402px;top:456px;width:14px;height:14px;background:#045504;border-radius:4px"><svg style="position:absolute;left:0;top:0" width="14" height="14" viewBox="0 0 14 14" fill="none" stroke="#9cb89c" stroke-width="0.9"><path d="M3.3 6.7 L5.8 9.1 L11 4.5"/></svg></div><div style="position:absolute;left:420px;top:456px;width:14px;height:14px;background:#045504;border-radius:4px"><svg style="position:absolute;left:0;top:0" width="14" height="14" viewBox="0 0 14 14" fill="none" stroke="#9cb89c" stroke-width="0.9"><path d="M3.3 6.7 L5.8 9.1 L11 4.5"/></svg></div><div style="position:absolute;left:438px;top:456px;width:14px;height:14px;background:#045504;border-radius:4px"><svg style="position:absolute;left:0;top:0" width="14" height="14" viewBox="0 0 14 14" fill="none" stroke="#9cb89c" stroke-width="0.9"><path d="M3.3 6.7 L5.8 9.1 L11 4.5"/></svg></div><div style="position:absolute;left:456px;top:456px;width:14px;height:14px;background:#045504;border-radius:4px"><svg style="position:absolute;left:0;top:0" width="14" height="14" viewBox="0 0 14 14" fill="none" stroke="#9cb89c" stroke-width="0.9"><path d="M3.3 6.7 L5.8 9.1 L11 4.5"/></svg></div><div style="position:absolute;left:474px;top:456px;width:14px;height:14px;background:#045504;border-radius:4px"><svg style="position:absolute;left:0;top:0" width="14" height="14" viewBox="0 0 14 14" fill="none" stroke="#9cb89c" stroke-width="0.9"><path d="M3.3 6.7 L5.8 9.1 L11 4.5"/></svg></div><div style="position:absolute;left:92px;top:490px;width:224px;height:1px;background:#1f1f22"></div><div style="position:absolute;left:100.40px;top:476.45px;font:normal 14px/14px 'Liberation Sans', sans-serif;letter-spacing:-0.198px;color:#fafafa;white-space:nowrap;">create_tag_template_result2</div><div style="position:absolute;left:330px;top:476px;width:14px;height:14px;background:#045504;border-radius:4px"><svg style="position:absolute;left:0;top:0" width="14" height="14" viewBox="0 0 14 14" fill="none" stroke="#9cb89c" stroke-width="0.9"><path d="M3.3 6.7 L5.8 9.1 L11 4.5"/></svg></div><div style="position:absolute;left:348px;top:476px;width:14px;height:14px;background:#045504;border-radius:4px"><svg style="position:absolute;left:0;top:0" width="14" height="14" viewBox="0 0 14 14" fill="none" stroke="#9cb89c" stroke-width="0.9"><path d="M3.3 6.7 L5.8 9.1 L11 4.5"/></svg></div><div style="position:absolute;left:366px;top:476px;width:14px;height:14px;background:#045504;border-radius:4px"><svg style="position:absolute;left:0;top:0" width="14" height="14" viewBox="0 0 14 14" fill="none" stroke="#9cb89c" stroke-width="0.9"><path d="M3.3 6.7 L5.8 9.1 L11 4.5"/></svg></div><div style="position:absolute;left:384px;top:476px;width:14px;height:14px;background:#045504;border-radius:4px"><svg style="position:absolute;left:0;top:0" width="14" height="14" viewBox="0 0 14 14" fill="none" stroke="#9cb89c" stroke-width="0.9"><path d="M3.3 6.7 L5.8 9.1 L11 4.5"/></svg></div><div style="position:absolute;left:402px;top:476px;width:14px;height:14px;background:#045504;border-radius:4px"><svg style="position:absolute;left:0;top:0" width="14" height="14" viewBox="0 0 14 14" fill="none" stroke="#9cb89c" stroke-width="0.9"><path d="M3.3 6.7 L5.8 9.1 L11 4.5"/></svg></div><div style="position:absolute;left:420px;top:476px;width:14px;height:14px;background:#045504;border-radius:4px"><svg style="position:absolute;left:0;top:0" width="14" height="14" viewBox="0 0 14 14" fill="none" stroke="#9cb89c" stroke-width="0.9"><path d="M3.3 6.7 L5.8 9.1 L11 4.5"/></svg></div><div style="position:absolute;left:438px;top:476px;width:14px;height:14px;background:#045504;border-radius:4px"><svg style="position:absolute;left:0;top:0" width="14" height="14" viewBox="0 0 14 14" fill="none" stroke="#9cb89c" stroke-width="0.9"><path d="M3.3 6.7 L5.8 9.1 L11 4.5"/></svg></div><div style="position:absolute;left:456px;top:476px;width:14px;height:14px;background:#045504;border-radius:4px"><svg style="position:absolute;left:0;top:0" width="14" height="14" viewBox="0 0 14 14" fill="none" stroke="#9cb89c" stroke-width="0.9"><path d="M3.3 6.7 L5.8 9.1 L11 4.5"/></svg></div><div style="position:absolute;left:474px;top:476px;width:14px;height:14px;background:#045504;border-radius:4px"><svg style="position:absolute;left:0;top:0" width="14" height="14" viewBox="0 0 14 14" fill="none" stroke="#9cb89c" stroke-width="0.9"><path d="M3.3 6.7 L5.8 9.1 L11 4.5"/></svg></div><div style="position:absolute;left:92px;top:510px;width:224px;height:1px;background:#1f1f22"></div><div style="position:absolute;left:100.40px;top:496.45px;font:normal 14px/14px 'Liberation Sans', sans-serif;letter-spacing:-0.285px;color:#fafafa;white-space:nowrap;">get_entry</div><div style="position:absolute;left:330px;top:496px;width:14px;height:14px;background:#045504;border-radius:4px"><svg style="position:absolute;left:0;top:0" width="14" height="14" viewBox="0 0 14 14" fill="none" stroke="#9cb89c" stroke-width="0.9"><path d="M3.3 6.7 L5.8 9.1 L11 4.5"/></svg></div><div style="position:absolute;left:348px;top:496px;width:14px;height:14px;background:#045504;border-radius:4px"><svg style="position:absolute;left:0;top:0" width="14" height="14" viewBox="0 0 14 14" fill="none" stroke="#9cb89c" stroke-width="0.9"><path d="M3.3 6.7 L5.8 9.1 L11 4.5"/></svg></div><div style="position:absolute;left:366px;top:496px;width:14px;height:14px;background:#045504;border-radius:4px"><svg style="position:absolute;left:0;top:0" width="14" height="14" viewBox="0 0 14 14" fill="none" stroke="#9cb89c" stroke-width="0.9"><path d="M3.3 6.7 L5.8 9.1 L11 4.5"/></svg></div><div style="position:absolute;left:384px;top:496px;width:14px;height:14px;background:#045504;border-radius:4px"><svg style="position:absolute;left:0;top:0" width="14" height="14" viewBox="0 0 14 14" fill="none" stroke="#9cb89c" stroke-width="0.9"><path d="M3.3 6.7 L5.8 9.1 L11 4.5"/></svg></div><div style="position:absolute;left:402px;top:496px;width:14px;height:14px;background:#045504;border-radius:4px"><svg style="position:absolute;left:0;top:0" width="14" height="14" viewBox="0 0 14 14" fill="none" stroke="#9cb89c" stroke-width="0.9"><path d="M3.3 6.7 L5.8 9.1 L11 4.5"/></svg></div><div style="position:absolute;left:420px;top:496px;width:14px;height:14px;background:#045504;border-radius:4px"><svg style="position:absolute;left:0;top:0" width="14" height="14" viewBox="0 0 14 14" fill="none" stroke="#9cb89c" stroke-width="0.9"><path d="M3.3 6.7 L5.8 9.1 L11 4.5"/></svg></div><div style="position:absolute;left:438px;top:496px;width:14px;height:14px;background:#045504;border-radius:4px"><svg style="position:absolute;left:0;top:0" width="14" height="14" viewBox="0 0 14 14" fill="none" stroke="#9cb89c" stroke-width="0.9"><path d="M3.3 6.7 L5.8 9.1 L11 4.5"/></svg></div><div style="position:absolute;left:456px;top:496px;width:14px;height:14px;background:#045504;border-radius:4px"><svg style="position:absolute;left:0;top:0" width="14" height="14" viewBox="0 0 14 14" fill="none" stroke="#9cb89c" stroke-width="0.9"><path d="M3.3 6.7 L5.8 9.1 L11 4.5"/></svg></div><div style="position:absolute;left:474px;top:496px;width:14px;height:14px;background:#045504;border-radius:4px"><svg style="position:absolute;left:0;top:0" width="14" height="14" viewBox="0 0 14 14" fill="none" stroke="#9cb89c" stroke-width="0.9"><path d="M3.3 6.7 L5.8 9.1 L11 4.5"/></svg></div><div style="position:absolute;left:92px;top:530px;width:224px;height:1px;background:#1f1f22"></div><div style="position:absolute;left:100.40px;top:516.45px;font:normal 14px/14px 'Liberation Sans', sans-serif;letter-spacing:-0.227px;color:#fafafa;white-space:nowrap;">get_entry_result</div><div style="position:absolute;left:330px;top:516px;width:14px;height:14px;background:#045504;border-radius:4px"><svg style="position:absolute;left:0;top:0" width="14" height="14" viewBox="0 0 14 14" fill="none" stroke="#9cb89c" stroke-width="0.9"><path d="M3.3 6.7 L5.8 9.1 L11 4.5"/></svg></div><div style="position:absolute;left:348px;top:516px;width:14px;height:14px;background:#045504;border-radius:4px"><svg style="position:absolute;left:0;top:0" width="14" height="14" viewBox="0 0 14 14" fill="none" stroke="#9cb89c" stroke-width="0.9"><path d="M3.3 6.7 L5.8 9.1 L11 4.5"/></svg></div><div style="position:absolute;left:366px;top:516px;width:14px;height:14px;background:#045504;border-radius:4px"><svg style="position:absolute;left:0;top:0" width="14" height="14" viewBox="0 0 14 14" fill="none" stroke="#9cb89c" stroke-width="0.9"><path d="M3.3 6.7 L5.8 9.1 L11 4.5"/></svg></div><div style="position:absolute;left:384px;top:516px;width:14px;height:14px;background:#045504;border-radius:4px"><svg style="position:absolute;left:0;top:0" width="14" height="14" viewBox="0 0 14 14" fill="none" stroke="#9cb89c" stroke-width="0.9"><path d="M3.3 6.7 L5.8 9.1 L11 4.5"/></svg></div><div style="position:absolute;left:402px;top:516px;width:14px;height:14px;background:#045504;border-radius:4px"><svg style="position:absolute;left:0;top:0" width="14" height="14" viewBox="0 0 14 14" fill="none" stroke="#9cb89c" stroke-width="0.9"><path d="M3.3 6.7 L5.8 9.1 L11 4.5"/></svg></div><div style="position:absolute;left:420px;top:516px;width:14px;height:14px;background:#045504;border-radius:4px"><svg style="position:absolute;left:0;top:0" width="14" height="14" viewBox="0 0 14 14" fill="none" stroke="#9cb89c" stroke-width="0.9"><path d="M3.3 6.7 L5.8 9.1 L11 4.5"/></svg></div><div style="position:absolute;left:438px;top:516px;width:14px;height:14px;background:#045504;border-radius:4px"><svg style="position:absolute;left:0;top:0" width="14" height="14" viewBox="0 0 14 14" fill="none" stroke="#9cb89c" stroke-width="0.9"><path d="M3.3 6.7 L5.8 9.1 L11 4.5"/></svg></div><div style="position:absolute;left:456px;top:516px;width:14px;height:14px;background:#045504;border-radius:4px"><svg style="position:absolute;left:0;top:0" width="14" height="14" viewBox="0 0 14 14" fill="none" stroke="#9cb89c" stroke-width="0.9"><path d="M3.3 6.7 L5.8 9.1 L11 4.5"/></svg></div><div style="position:absolute;left:474px;top:516px;width:14px;height:14px;background:#045504;border-radius:4px"><svg style="position:absolute;left:0;top:0" width="14" height="14" viewBox="0 0 14 14" fill="none" stroke="#9cb89c" stroke-width="0.9"><path d="M3.3 6.7 L5.8 9.1 L11 4.5"/></svg></div><div style="position:absolute;left:92px;top:550px;width:224px;height:1px;background:#1f1f22"></div><div style="position:absolute;left:100.40px;top:536.45px;font:normal 14px/14px 'Liberation Sans', sans-serif;letter-spacing:-0.227px;color:#fafafa;white-space:nowrap;">get_tag_template</div><div style="position:absolute;left:330px;top:536px;width:14px;height:14px;background:#045504;border-radius:4px"><svg style="position:absolute;left:0;top:0" width="14" height="14" viewBox="0 0 14 14" fill="none" stroke="#9cb89c" stroke-width="0.9"><path d="M3.3 6.7 L5.8 9.1 L11 4.5"/></svg></div><div style="position:absolute;left:348px;top:536px;width:14px;height:14px;background:#045504;border-radius:4px"><svg style="position:absolute;left:0;top:0" width="14" height="14" viewBox="0 0 14 14" fill="none" stroke="#9cb89c" stroke-width="0.9"><path d="M3.3 6.7 L5.8 9.1 L11 4.5"/></svg></div><div style="position:absolute;left:366px;top:536px;width:14px;height:14px;background:#045504;border-radius:4px"><svg style="position:absolute;left:0;top:0" width="14" height="14" viewBox="0 0 14 14" fill="none" stroke="#9cb89c" stroke-width="0.9"><path d="M3.3 6.7 L5.8 9.1 L11 4.5"/></svg></div><div style="position:absolute;left:384px;top:536px;width:14px;height:14px;background:#045504;border-radius:4px"><svg style="position:absolute;left:0;top:0" width="14" height="14" viewBox="0 0 14 14" fill="none" stroke="#9cb89c" stroke-width="0.9"><path d="M3.3 6.7 L5.8 9.1 L11 4.5"/></svg></div><div style="position:absolute;left:402px;top:536px;width:14px;height:14px;background:#045504;border-radius:4px"><svg style="position:absolute;left:0;top:0" width="14" height="14" viewBox="0 0 14 14" fill="none" stroke="#9cb89c" stroke-width="0.9"><path d="M3.3 6.7 L5.8 9.1 L11 4.5"/></svg></div><div style="position:absolute;left:420px;top:536px;width:14px;height:14px;background:#045504;border-radius:4px"><svg style="position:absolute;left:0;top:0" width="14" height="14" viewBox="0 0 14 14" fill="none" stroke="#9cb89c" stroke-width="0.9"><path d="M3.3 6.7 L5.8 9.1 L11 4.5"/></svg></div><div style="position:absolute;left:438px;top:536px;width:14px;height:14px;background:#045504;border-radius:4px"><svg style="position:absolute;left:0;top:0" width="14" height="14" viewBox="0 0 14 14" fill="none" stroke="#9cb89c" stroke-width="0.9"><path d="M3.3 6.7 L5.8 9.1 L11 4.5"/></svg></div><div style="position:absolute;left:456px;top:536px;width:14px;height:14px;background:#045504;border-radius:4px"><svg style="position:absolute;left:0;top:0" width="14" height="14" viewBox="0 0 14 14" fill="none" stroke="#9cb89c" stroke-width="0.9"><path d="M3.3 6.7 L5.8 9.1 L11 4.5"/></svg></div><div style="position:absolute;left:474px;top:536px;width:14px;height:14px;background:#045504;border-radius:4px"><svg style="position:absolute;left:0;top:0" width="14" height="14" viewBox="0 0 14 14" fill="none" stroke="#9cb89c" stroke-width="0.9"><path d="M3.3 6.7 L5.8 9.1 L11 4.5"/></svg></div><div style="position:absolute;left:92px;top:570px;width:224px;height:1px;background:#1f1f22"></div><div style="position:absolute;left:100.40px;top:556.45px;font:normal 14px/14px 'Liberation Sans', sans-serif;letter-spacing:-0.206px;color:#fafafa;white-space:nowrap;">get_tag_template_result</div><div style="position:absolute;left:330px;top:556px;width:14px;height:14px;background:#045504;border-radius:4px"><svg style="position:absolute;left:0;top:0" width="14" height="14" viewBox="0 0 14 14" fill="none" stroke="#9cb89c" stroke-width="0.9"><path d="M3.3 6.7 L5.8 9.1 L11 4.5"/></svg></div><div style="position:absolute;left:348px;top:556px;width:14px;height:14px;background:#045504;border-radius:4px"><svg style="position:absolute;left:0;top:0" width="14" height="14" viewBox="0 0 14 14" fill="none" stroke="#9cb89c" stroke-width="0.9"><path d="M3.3 6.7 L5.8 9.1 L11 4.5"/></svg></div><div style="position:absolute;left:366px;top:556px;width:14px;height:14px;background:#045504;border-radius:4px"><svg style="position:absolute;left:0;top:0" width="14" height="14" viewBox="0 0 14 14" fill="none" stroke="#9cb89c" stroke-width="0.9"><path d="M3.3 6.7 L5.8 9.1 L11 4.5"/></svg></div><div style="position:absolute;left:384px;top:556px;width:14px;height:14px;background:#045504;border-radius:4px"><svg style="position:absolute;left:0;top:0" width="14" height="14" viewBox="0 0 14 14" fill="none" stroke="#9cb89c" stroke-width="0.9"><path d="M3.3 6.7 L5.8 9.1 L11 4.5"/></svg></div><div style="position:absolute;left:402px;top:556px;width:14px;height:14px;background:#045504;border-radius:4px"><svg style="position:absolute;left:0;top:0" width="14" height="14" viewBox="0 0 14 14" fill="none" stroke="#9cb89c" stroke-width="0.9"><path d="M3.3 6.7 L5.8 9.1 L11 4.5"/></svg></div><div style="position:absolute;left:420px;top:556px;width:14px;height:14px;background:#045504;border-radius:4px"><svg style="position:absolute;left:0;top:0" width="14" height="14" viewBox="0 0 14 14" fill="none" stroke="#9cb89c" stroke-width="0.9"><path d="M3.3 6.7 L5.8 9.1 L11 4.5"/></svg></div><div style="position:absolute;left:438px;top:556px;width:14px;height:14px;background:#045504;border-radius:4px"><svg style="position:absolute;left:0;top:0" width="14" height="14" viewBox="0 0 14 14" fill="none" stroke="#9cb89c" stroke-width="0.9"><path d="M3.3 6.7 L5.8 9.1 L11 4.5"/></svg></div><div style="position:absolute;left:456px;top:556px;width:14px;height:14px;background:#045504;border-radius:4px"><svg style="position:absolute;left:0;top:0" width="14" height="14" viewBox="0 0 14 14" fill="none" stroke="#9cb89c" stroke-width="0.9"><path d="M3.3 6.7 L5.8 9.1 L11 4.5"/></svg></div><div style="position:absolute;left:474px;top:556px;width:14px;height:14px;background:#045504;border-radius:4px"><svg style="position:absolute;left:0;top:0" width="14" height="14" viewBox="0 0 14 14" fill="none" stroke="#9cb89c" stroke-width="0.9"><path d="M3.3 6.7 L5.8 9.1 L11 4.5"/></svg></div><div style="position:absolute;left:92px;top:590px;width:224px;height:1px;background:#1f1f22"></div><div style="position:absolute;left:100.40px;top:576.45px;font:normal 14px/14px 'Liberation Sans', sans-serif;letter-spacing:-0.251px;color:#fafafa;white-space:nowrap;">lookup_entry</div><div style="position:absolute;left:330px;top:576px;width:14px;height:14px;background:#045504;border-radius:4px"><svg style="position:absolute;left:0;top:0" width="14" height="14" viewBox="0 0 14 14" fill="none" stroke="#9cb89c" stroke-width="0.9"><path d="M3.3 6.7 L5.8 9.1 L11 4.5"/></svg></div><div style="position:absolute;left:348px;top:576px;width:14px;height:14px;background:#045504;border-radius:4px"><svg style="position:absolute;left:0;top:0" width="14" height="14" viewBox="0 0 14 14" fill="none" stroke="#9cb89c" stroke-width="0.9"><path d="M3.3 6.7 L5.8 9.1 L11 4.5"/></svg></div><div style="position:absolute;left:366px;top:576px;width:14px;height:14px;background:#045504;border-radius:4px"><svg style="position:absolute;left:0;top:0" width="14" height="14" viewBox="0 0 14 14" fill="none" stroke="#9cb89c" stroke-width="0.9"><path d="M3.3 6.7 L5.8 9.1 L11 4.5"/></svg></div><div style="position:absolute;left:384px;top:576px;width:14px;height:14px;background:#045504;border-radius:4px"><svg style="position:absolute;left:0;top:0" width="14" height="14" viewBox="0 0 14 14" fill="none" stroke="#9cb89c" stroke-width="0.9"><path d="M3.3 6.7 L5.8 9.1 L11 4.5"/></svg></div><div style="position:absolute;left:402px;top:576px;width:14px;height:14px;background:#045504;border-radius:4px"><svg style="position:absolute;left:0;top:0" width="14" height="14" viewBox="0 0 14 14" fill="none" stroke="#9cb89c" stroke-width="0.9"><path d="M3.3 6.7 L5.8 9.1 L11 4.5"/></svg></div><div style="position:absolute;left:420px;top:576px;width:14px;height:14px;background:#045504;border-radius:4px"><svg style="position:absolute;left:0;top:0" width="14" height="14" viewBox="0 0 14 14" fill="none" stroke="#9cb89c" stroke-width="0.9"><path d="M3.3 6.7 L5.8 9.1 L11 4.5"/></svg></div><div style="position:absolute;left:438px;top:576px;width:14px;height:14px;background:#045504;border-radius:4px"><svg style="position:absolute;left:0;top:0" width="14" height="14" viewBox="0 0 14 14" fill="none" stroke="#9cb89c" stroke-width="0.9"><path d="M3.3 6.7 L5.8 9.1 L11 4.5"/></svg></div><div style="position:absolute;left:456px;top:576px;width:14px;height:14px;background:#045504;border-radius:4px"><svg style="position:absolute;left:0;top:0" width="14" height="14" viewBox="0 0 14 14" fill="none" stroke="#9cb89c" stroke-width="0.9"><path d="M3.3 6.7 L5.8 9.1 L11 4.5"/></svg></div><div style="position:absolute;left:474px;top:576px;width:14px;height:14px;background:#045504;border-radius:4px"><svg style="position:absolute;left:0;top:0" width="14" height="14" viewBox="0 0 14 14" fill="none" stroke="#9cb89c" stroke-width="0.9"><path d="M3.3 6.7 L5.8 9.1 L11 4.5"/></svg></div><div style="position:absolute;left:92px;top:610px;width:224px;height:1px;background:#1f1f22"></div><div style="position:absolute;left:100.40px;top:596.45px;font:normal 14px/14px 'Liberation Sans', sans-serif;letter-spacing:-0.216px;color:#fafafa;white-space:nowrap;">lookup_entry_result</div><div style="position:absolute;left:330px;top:596px;width:14px;height:14px;background:#045504;border-radius:4px"><svg style="position:absolute;left:0;top:0" width="14" height="14" viewBox="0 0 14 14" fill="none" stroke="#9cb89c" stroke-width="0.9"><path d="M3.3 6.7 L5.8 9.1 L11 4.5"/></svg></div><div style="position:absolute;left:348px;top:596px;width:14px;height:14px;background:#045504;border-radius:4px"><svg style="position:absolute;left:0;top:0" width="14" height="14" viewBox="0 0 14 14" fill="none" stroke="#9cb89c" stroke-width="0.9"><path d="M3.3 6.7 L5.8 9.1 L11 4.5"/></svg></div><div style="position:absolute;left:366px;top:596px;width:14px;height:14px;background:#045504;border-radius:4px"><svg style="position:absolute;left:0;top:0" width="14" height="14" viewBox="0 0 14 14" fill="none" stroke="#9cb89c" stroke-width="0.9"><path d="M3.3 6.7 L5.8 9.1 L11 4.5"/></svg></div><div style="position:absolute;left:384px;top:596px;width:14px;height:14px;background:#045504;border-radius:4px"><svg style="position:absolute;left:0;top:0" width="14" height="14" viewBox="0 0 14 14" fill="none" stroke="#9cb89c" stroke-width="0.9"><path d="M3.3 6.7 L5.8 9.1 L11 4.5"/></svg></div><div style="position:absolute;left:402px;top:596px;width:14px;height:14px;background:#045504;border-radius:4px"><svg style="position:absolute;left:0;top:0" width="14" height="14" viewBox="0 0 14 14" fill="none" stroke="#9cb89c" stroke-width="0.9"><path d="M3.3 6.7 L5.8 9.1 L11 4.5"/></svg></div><div style="position:absolute;left:420px;top:596px;width:14px;height:14px;background:#045504;border-radius:4px"><svg style="position:absolute;left:0;top:0" width="14" height="14" viewBox="0 0 14 14" fill="none" stroke="#9cb89c" stroke-width="0.9"><path d="M3.3 6.7 L5.8 9.1 L11 4.5"/></svg></div><div style="position:absolute;left:438px;top:596px;width:14px;height:14px;background:#045504;border-radius:4px"><svg style="position:absolute;left:0;top:0" width="14" height="14" viewBox="0 0 14 14" fill="none" stroke="#9cb89c" stroke-width="0.9"><path d="M3.3 6.7 L5.8 9.1 L11 4.5"/></svg></div><div style="position:absolute;left:456px;top:596px;width:14px;height:14px;background:#045504;border-radius:4px"><svg style="position:absolute;left:0;top:0" width="14" height="14" viewBox="0 0 14 14" fill="none" stroke="#9cb89c" stroke-width="0.9"><path d="M3.3 6.7 L5.8 9.1 L11 4.5"/></svg></div><div style="position:absolute;left:474px;top:596px;width:14px;height:14px;background:#045504;border-radius:4px"><svg style="position:absolute;left:0;top:0" width="14" height="14" viewBox="0 0 14 14" fill="none" stroke="#9cb89c" stroke-width="0.9"><path d="M3.3 6.7 L5.8 9.1 L11 4.5"/></svg></div><div style="position:absolute;left:92px;top:630px;width:224px;height:1px;background:#1f1f22"></div><div style="position:absolute;left:100.40px;top:616.45px;font:normal 14px/14px 'Liberation Sans', sans-serif;letter-spacing:-0.251px;color:#fafafa;white-space:nowrap;">update_entry</div><div style="position:absolute;left:330px;top:616px;width:14px;height:14px;background:#045504;border-radius:4px"><svg style="position:absolute;left:0;top:0" width="14" height="14" viewBox="0 0 14 14" fill="none" stroke="#9cb89c" stroke-width="0.9"><path d="M3.3 6.7 L5.8 9.1 L11 4.5"/></svg></div><div style="position:absolute;left:348px;top:616px;width:14px;height:14px;background:#045504;border-radius:4px"><svg style="position:absolute;left:0;top:0" width="14" height="14" viewBox="0 0 14 14" fill="none" stroke="#9cb89c" stroke-width="0.9"><path d="M3.3 6.7 L5.8 9.1 L11 4.5"/></svg></div><div style="position:absolute;left:366px;top:616px;width:14px;height:14px;background:#045504;border-radius:4px"><svg style="position:absolute;left:0;top:0" width="14" height="14" viewBox="0 0 14 14" fill="none" stroke="#9cb89c" stroke-width="0.9"><path d="M3.3 6.7 L5.8 9.1 L11 4.5"/></svg></div><div style="position:absolute;left:384px;top:616px;width:14px;height:14px;background:#045504;border-radius:4px"><svg style="position:absolute;left:0;top:0" width="14" height="14" viewBox="0 0 14 14" fill="none" stroke="#9cb89c" stroke-width="0.9"><path d="M3.3 6.7 L5.8 9.1 L11 4.5"/></svg></div><div style="position:absolute;left:402px;top:616px;width:14px;height:14px;background:#045504;border-radius:4px"><svg style="position:absolute;left:0;top:0" width="14" height="14" viewBox="0 0 14 14" fill="none" stroke="#9cb89c" stroke-width="0.9"><path d="M3.3 6.7 L5.8 9.1 L11 4.5"/></svg></div><div style="position:absolute;left:420px;top:616px;width:14px;height:14px;background:#045504;border-radius:4px"><svg style="position:absolute;left:0;top:0" width="14" height="14" viewBox="0 0 14 14" fill="none" stroke="#9cb89c" stroke-width="0.9"><path d="M3.3 6.7 L5.8 9.1 L11 4.5"/></svg></div><div style="position:absolute;left:438px;top:616px;width:14px;height:14px;background:#045504;border-radius:4px"><svg style="position:absolute;left:0;top:0" width="14" height="14" viewBox="0 0 14 14" fill="none" stroke="#9cb89c" stroke-width="0.9"><path d="M3.3 6.7 L5.8 9.1 L11 4.5"/></svg></div><div style="position:absolute;left:456px;top:616px;width:14px;height:14px;background:#045504;border-radius:4px"><svg style="position:absolute;left:0;top:0" width="14" height="14" viewBox="0 0 14 14" fill="none" stroke="#9cb89c" stroke-width="0.9"><path d="M3.3 6.7 L5.8 9.1 L11 4.5"/></svg></div><div style="position:absolute;left:474px;top:616px;width:14px;height:14px;background:#045504;border-radius:4px"><svg style="position:absolute;left:0;top:0" width="14" height="14" viewBox="0 0 14 14" fill="none" stroke="#9cb89c" stroke-width="0.9"><path d="M3.3 6.7 L5.8 9.1 L11 4.5"/></svg></div><div style="position:absolute;left:92px;top:650px;width:224px;height:1px;background:#1f1f22"></div><div style="position:absolute;left:100.40px;top:636.45px;font:normal 14px/14px 'Liberation Sans', sans-serif;letter-spacing:-0.215px;color:#fafafa;white-space:nowrap;">update_tag_template</div><div style="position:absolute;left:330px;top:636px;width:14px;height:14px;background:#045504;border-radius:4px"><svg style="position:absolute;left:0;top:0" width="14" height="14" viewBox="0 0 14 14" fill="none" stroke="#9cb89c" stroke-width="0.9"><path d="M3.3 6.7 L5.8 9.1 L11 4.5"/></svg></div><div style="position:absolute;left:348px;top:636px;width:14px;height:14px;background:#045504;border-radius:4px"><svg style="position:absolute;left:0;top:0" width="14" height="14" viewBox="0 0 14 14" fill="none" stroke="#9cb89c" stroke-width="0.9"><path d="M3.3 6.7 L5.8 9.1 L11 4.5"/></svg></div><div style="position:absolute;left:366px;top:636px;width:14px;height:14px;background:#045504;border-radius:4px"><svg style="position:absolute;left:0;top:0" width="14" height="14" viewBox="0 0 14 14" fill="none" stroke="#9cb89c" stroke-width="0.9"><path d="M3.3 6.7 L5.8 9.1 L11 4.5"/></svg></div><div style="position:absolute;left:384px;top:636px;width:14px;height:14px;background:#045504;border-radius:4px"><svg style="position:absolute;left:0;top:0" width="14" height="14" viewBox="0 0 14 14" fill="none" stroke="#9cb89c" stroke-width="0.9"><path d="M3.3 6.7 L5.8 9.1 L11 4.5"/></svg></div><div style="position:absolute;left:402px;top:636px;width:14px;height:14px;background:#045504;border-radius:4px"><svg style="position:absolute;left:0;top:0" width="14" height="14" viewBox="0 0 14 14" fill="none" stroke="#9cb89c" stroke-width="0.9"><path d="M3.3 6.7 L5.8 9.1 L11 4.5"/></svg></div><div style="position:absolute;left:420px;top:636px;width:14px;height:14px;background:#045504;border-radius:4px"><svg style="position:absolute;left:0;top:0" width="14" height="14" viewBox="0 0 14 14" fill="none" stroke="#9cb89c" stroke-width="0.9"><path d="M3.3 6.7 L5.8 9.1 L11 4.5"/></svg></div><div style="position:absolute;left:438px;top:636px;width:14px;height:14px;background:#045504;border-radius:4px"><svg style="position:absolute;left:0;top:0" width="14" height="14" viewBox="0 0 14 14" fill="none" stroke="#9cb89c" stroke-width="0.9"><path d="M3.3 6.7 L5.8 9.1 L11 4.5"/></svg></div><div style="position:absolute;left:456px;top:636px;width:14px;height:14px;background:#045504;border-radius:4px"><svg style="position:absolute;left:0;top:0" width="14" height="14" viewBox="0 0 14 14" fill="none" stroke="#9cb89c" stroke-width="0.9"><path d="M3.3 6.7 L5.8 9.1 L11 4.5"/></svg></div><div style="position:absolute;left:474px;top:636px;width:14px;height:14px;background:#045504;border-radius:4px"><svg style="position:absolute;left:0;top:0" width="14" height="14" viewBox="0 0 14 14" fill="none" stroke="#9cb89c" stroke-width="0.9"><path d="M3.3 6.7 L5.8 9.1 L11 4.5"/></svg></div><div style="position:absolute;left:92px;top:670px;width:224px;height:1px;background:#1f1f22"></div><div style="position:absolute;left:100.40px;top:656.45px;font:normal 14px/14px 'Liberation Sans', sans-serif;letter-spacing:-0.202px;color:#fafafa;white-space:nowrap;">update_tag_template_field</div><div style="position:absolute;left:330px;top:656px;width:14px;height:14px;background:#045504;border-radius:4px"><svg style="position:absolute;left:0;top:0" width="14" height="14" viewBox="0 0 14 14" fill="none" stroke="#9cb89c" stroke-width="0.9"><path d="M3.3 6.7 L5.8 9.1 L11 4.5"/></svg></div><div style="position:absolute;left:348px;top:656px;width:14px;height:14px;background:#045504;border-radius:4px"><svg style="position:absolute;left:0;top:0" width="14" height="14" viewBox="0 0 14 14" fill="none" stroke="#9cb89c" stroke-width="0.9"><path d="M3.3 6.7 L5.8 9.1 L11 4.5"/></svg></div><div style="position:absolute;left:366px;top:656px;width:14px;height:14px;background:#045504;border-radius:4px"><svg style="position:absolute;left:0;top:0" width="14" height="14" viewBox="0 0 14 14" fill="none" stroke="#9cb89c" stroke-width="0.9"><path d="M3.3 6.7 L5.8 9.1 L11 4.5"/></svg></div><div style="position:absolute;left:384px;top:656px;width:14px;height:14px;background:#045504;border-radius:4px"><svg style="position:absolute;left:0;top:0" width="14" height="14" viewBox="0 0 14 14" fill="none" stroke="#9cb89c" stroke-width="0.9"><path d="M3.3 6.7 L5.8 9.1 L11 4.5"/></svg></div><div style="position:absolute;left:402px;top:656px;width:14px;height:14px;background:#045504;border-radius:4px"><svg style="position:absolute;left:0;top:0" width="14" height="14" viewBox="0 0 14 14" fill="none" stroke="#9cb89c" stroke-width="0.9"><path d="M3.3 6.7 L5.8 9.1 L11 4.5"/></svg></div><div style="position:absolute;left:420px;top:656px;width:14px;height:14px;background:#045504;border-radius:4px"><svg style="position:absolute;left:0;top:0" width="14" height="14" viewBox="0 0 14 14" fill="none" stroke="#9cb89c" stroke-width="0.9"><path d="M3.3 6.7 L5.8 9.1 L11 4.5"/></svg></div><div style="position:absolute;left:438px;top:656px;width:14px;height:14px;background:#045504;border-radius:4px"><svg style="position:absolute;left:0;top:0" width="14" height="14" viewBox="0 0 14 14" fill="none" stroke="#9cb89c" stroke-width="0.9"><path d="M3.3 6.7 L5.8 9.1 L11 4.5"/></svg></div><div style="position:absolute;left:456px;top:656px;width:14px;height:14px;background:#045504;border-radius:4px"><svg style="position:absolute;left:0;top:0" width="14" height="14" viewBox="0 0 14 14" fill="none" stroke="#9cb89c" stroke-width="0.9"><path d="M3.3 6.7 L5.8 9.1 L11 4.5"/></svg></div><div style="position:absolute;left:474px;top:656px;width:14px;height:14px;background:#045504;border-radius:4px"><svg style="position:absolute;left:0;top:0" width="14" height="14" viewBox="0 0 14 14" fill="none" stroke="#9cb89c" stroke-width="0.9"><path d="M3.3 6.7 L5.8 9.1 L11 4.5"/></svg></div><div style="position:absolute;left:92px;top:690px;width:224px;height:1px;background:#1f1f22"></div><div style="position:absolute;left:100.40px;top:676.45px;font:normal 14px/14px 'Liberation Sans', sans-serif;letter-spacing:-0.271px;color:#fafafa;white-space:nowrap;">create_tag</div><div style="position:absolute;left:330px;top:676px;width:14px;height:14px;background:#045504;border-radius:4px"><svg style="position:absolute;left:0;top:0" width="14" height="14" viewBox="0 0 14 14" fill="none" stroke="#9cb89c" stroke-width="0.9"><path d="M3.3 6.7 L5.8 9.1 L11 4.5"/></svg></div><div style="position:absolute;left:348px;top:676px;width:14px;height:14px;background:#045504;border-radius:4px"><svg style="position:absolute;left:0;top:0" width="14" height="14" viewBox="0 0 14 14" fill="none" stroke="#9cb89c" stroke-width="0.9"><path d="M3.3 6.7 L5.8 9.1 L11 4.5"/></svg></div><div style="position:absolute;left:366px;top:676px;width:14px;height:14px;background:#045504;border-radius:4px"><svg style="position:absolute;left:0;top:0" width="14" height="14" viewBox="0 0 14 14" fill="none" stroke="#9cb89c" stroke-width="0.9"><path d="M3.3 6.7 L5.8 9.1 L11 4.5"/></svg></div><div style="position:absolute;left:384px;top:676px;width:14px;height:14px;background:#045504;border-radius:4px"><svg style="position:absolute;left:0;top:0" width="14" height="14" viewBox="0 0 14 14" fill="none" stroke="#9cb89c" stroke-width="0.9"><path d="M3.3 6.7 L5.8 9.1 L11 4.5"/></svg></div><div style="position:absolute;left:402px;top:676px;width:14px;height:14px;background:#045504;border-radius:4px"><svg style="position:absolute;left:0;top:0" width="14" height="14" viewBox="0 0 14 14" fill="none" stroke="#9cb89c" stroke-width="0.9"><path d="M3.3 6.7 L5.8 9.1 L11 4.5"/></svg></div><div style="position:absolute;left:420px;top:676px;width:14px;height:14px;background:#045504;border-radius:4px"><svg style="position:absolute;left:0;top:0" width="14" height="14" viewBox="0 0 14 14" fill="none" stroke="#9cb89c" stroke-width="0.9"><path d="M3.3 6.7 L5.8 9.1 L11 4.5"/></svg></div><div style="position:absolute;left:438px;top:676px;width:14px;height:14px;background:#045504;border-radius:4px"><svg style="position:absolute;left:0;top:0" width="14" height="14" viewBox="0 0 14 14" fill="none" stroke="#9cb89c" stroke-width="0.9"><path d="M3.3 6.7 L5.8 9.1 L11 4.5"/></svg></div><div style="position:absolute;left:456px;top:676px;width:14px;height:14px;background:#045504;border-radius:4px"><svg style="position:absolute;left:0;top:0" width="14" height="14" viewBox="0 0 14 14" fill="none" stroke="#9cb89c" stroke-width="0.9"><path d="M3.3 6.7 L5.8 9.1 L11 4.5"/></svg></div><div style="position:absolute;left:474px;top:676px;width:14px;height:14px;background:#045504;border-radius:4px"><svg style="position:absolute;left:0;top:0" width="14" height="14" viewBox="0 0 14 14" fill="none" stroke="#9cb89c" stroke-width="0.9"><path d="M3.3 6.7 L5.8 9.1 L11 4.5"/></svg></div><div style="position:absolute;left:92px;top:710px;width:224px;height:1px;background:#1f1f22"></div><div style="position:absolute;left:100.40px;top:696.45px;font:normal 14px/14px 'Liberation Sans', sans-serif;letter-spacing:-0.223px;color:#fafafa;white-space:nowrap;">create_tag_result</div><div style="position:absolute;left:330px;top:696px;width:14px;height:14px;background:#045504;border-radius:4px"><svg style="position:absolute;left:0;top:0" width="14" height="14" viewBox="0 0 14 14" fill="none" stroke="#9cb89c" stroke-width="0.9"><path d="M3.3 6.7 L5.8 9.1 L11 4.5"/></svg></div><div style="position:absolute;left:348px;top:696px;width:14px;height:14px;background:#045504;border-radius:4px"><svg style="position:absolute;left:0;top:0" width="14" height="14" viewBox="0 0 14 14" fill="none" stroke="#9cb89c" stroke-width="0.9"><path d="M3.3 6.7 L5.8 9.1 L11 4.5"/></svg></div><div style="position:absolute;left:366px;top:696px;width:14px;height:14px;background:#045504;border-radius:4px"><svg style="position:absolute;left:0;top:0" width="14" height="14" viewBox="0 0 14 14" fill="none" stroke="#9cb89c" stroke-width="0.9"><path d="M3.3 6.7 L5.8 9.1 L11 4.5"/></svg></div><div style="position:absolute;left:384px;top:696px;width:14px;height:14px;background:#045504;border-radius:4px"><svg style="position:absolute;left:0;top:0" width="14" height="14" viewBox="0 0 14 14" fill="none" stroke="#9cb89c" stroke-width="0.9"><path d="M3.3 6.7 L5.8 9.1 L11 4.5"/></svg></div><div style="position:absolute;left:402px;top:696px;width:14px;height:14px;background:#045504;border-radius:4px"><svg style="position:absolute;left:0;top:0" width="14" height="14" viewBox="0 0 14 14" fill="none" stroke="#9cb89c" stroke-width="0.9"><path d="M3.3 6.7 L5.8 9.1 L11 4.5"/></svg></div><div style="position:absolute;left:420px;top:696px;width:14px;height:14px;background:#045504;border-radius:4px"><svg style="position:absolute;left:0;top:0" width="14" height="14" viewBox="0 0 14 14" fill="none" stroke="#9cb89c" stroke-width="0.9"><path d="M3.3 6.7 L5.8 9.1 L11 4.5"/></svg></div><div style="position:absolute;left:438px;top:696px;width:14px;height:14px;background:#045504;border-radius:4px"><svg style="position:absolute;left:0;top:0" width="14" height="14" viewBox="0 0 14 14" fill="none" stroke="#9cb89c" stroke-width="0.9"><path d="M3.3 6.7 L5.8 9.1 L11 4.5"/></svg></div><div style="position:absolute;left:456px;top:696px;width:14px;height:14px;background:#045504;border-radius:4px"><svg style="position:absolute;left:0;top:0" width="14" height="14" viewBox="0 0 14 14" fill="none" stroke="#9cb89c" stroke-width="0.9"><path d="M3.3 6.7 L5.8 9.1 L11 4.5"/></svg></div><div style="position:absolute;left:474px;top:696px;width:14px;height:14px;background:#045504;border-radius:4px"><svg style="position:absolute;left:0;top:0" width="14" height="14" viewBox="0 0 14 14" fill="none" stroke="#9cb89c" stroke-width="0.9"><path d="M3.3 6.7 L5.8 9.1 L11 4.5"/></svg></div><div style="position:absolute;left:92px;top:730px;width:224px;height:1px;background:#1f1f22"></div><div style="position:absolute;left:100.40px;top:716.45px;font:normal 14px/14px 'Liberation Sans', sans-serif;letter-spacing:-0.219px;color:#fafafa;white-space:nowrap;">create_tag_result2</div><div style="position:absolute;left:330px;top:716px;width:14px;height:14px;background:#045504;border-radius:4px"><svg style="position:absolute;left:0;top:0" width="14" height="14" viewBox="0 0 14 14" fill="none" stroke="#9cb89c" stroke-width="0.9"><path d="M3.3 6.7 L5.8 9.1 L11 4.5"/></svg></div><div style="position:absolute;left:348px;top:716px;width:14px;height:14px;background:#045504;border-radius:4px"><svg style="position:absolute;left:0;top:0" width="14" height="14" viewBox="0 0 14 14" fill="none" stroke="#9cb89c" stroke-width="0.9"><path d="M3.3 6.7 L5.8 9.1 L11 4.5"/></svg></div><div style="position:absolute;left:366px;top:716px;width:14px;height:14px;background:#045504;border-radius:4px"><svg style="position:absolute;left:0;top:0" width="14" height="14" viewBox="0 0 14 14" fill="none" stroke="#9cb89c" stroke-width="0.9"><path d="M3.3 6.7 L5.8 9.1 L11 4.5"/></svg></div><div style="position:absolute;left:384px;top:716px;width:14px;height:14px;background:#045504;border-radius:4px"><svg style="position:absolute;left:0;top:0" width="14" height="14" viewBox="0 0 14 14" fill="none" stroke="#9cb89c" stroke-width="0.9"><path d="M3.3 6.7 L5.8 9.1 L11 4.5"/></svg></div><div style="position:absolute;left:402px;top:716px;width:14px;height:14px;background:#045504;border-radius:4px"><svg style="position:absolute;left:0;top:0" width="14" height="14" viewBox="0 0 14 14" fill="none" stroke="#9cb89c" stroke-width="0.9"><path d="M3.3 6.7 L5.8 9.1 L11 4.5"/></svg></div><div style="position:absolute;left:420px;top:716px;width:14px;height:14px;background:#045504;border-radius:4px"><svg style="position:absolute;left:0;top:0" width="14" height="14" viewBox="0 0 14 14" fill="none" stroke="#9cb89c" stroke-width="0.9"><path d="M3.3 6.7 L5.8 9.1 L11 4.5"/></svg></div><div style="position:absolute;left:438px;top:716px;width:14px;height:14px;background:#045504;border-radius:4px"><svg style="position:absolute;left:0;top:0" width="14" height="14" viewBox="0 0 14 14" fill="none" stroke="#9cb89c" stroke-width="0.9"><path d="M3.3 6.7 L5.8 9.1 L11 4.5"/></svg></div><div style="position:absolute;left:456px;top:716px;width:14px;height:14px;background:#045504;border-radius:4px"><svg style="position:absolute;left:0;top:0" width="14" height="14" viewBox="0 0 14 14" fill="none" stroke="#9cb89c" stroke-width="0.9"><path d="M3.3 6.7 L5.8 9.1 L11 4.5"/></svg></div><div style="position:absolute;left:474px;top:716px;width:14px;height:14px;background:#045504;border-radius:4px"><svg style="position:absolute;left:0;top:0" width="14" height="14" viewBox="0 0 14 14" fill="none" stroke="#9cb89c" stroke-width="0.9"><path d="M3.3 6.7 L5.8 9.1 L11 4.5"/></svg></div></div><div style="position:absolute;left:498px;top:61px;width:2px;height:666px;background:#71717a;border-radius:1px"></div><div style="position:absolute;left:983px;top:13px;width:200px;height:40px;background:#18181b;border-radius:4px"></div><svg style="position:absolute;left:1001px;top:24px" width="17" height="17" viewBox="0 0 17 17" fill="none" stroke="#fafafa" stroke-width="1.8" stroke-linecap="round"><circle cx="7" cy="7" r="5"/><path d="M10.7 10.7 L15 15"/></svg><div style="position:absolute;left:1028.60px;top:27.25px;font:normal 14px/14px 'Liberation Sans', sans-serif;letter-spacing:-0.613px;color:#fafafa;white-space:nowrap;">Search Dags</div><div style="position:absolute;left:1112px;top:24px;width:50px;height:18px;box-sizing:border-box;border:1px solid #27272a;border-radius:4px;background:transparent"></div><div style="position:absolute;left:1117.20px;top:26.19px;font:normal 11.5px/11.5px 'Liberation Mono', monospace;letter-spacing:-0.461px;color:#e4e4e7;white-space:nowrap;">Ctrl+K</div><div style="position:absolute;left:1187px;top:13px;width:105px;height:40px;background:#2563eb;border-radius:4px"></div><svg style="position:absolute;left:1204px;top:23px" width="20" height="20" viewBox="0 0 20 20" fill="none" stroke="#fff" stroke-width="1.8" stroke-linejoin="round"><path d="M4 2.6 L16.5 10 L4 17.4 Z"/></svg><div style="position:absolute;left:1232.30px;top:27.15px;font:normal 14px/14px 'Liberation Sans', sans-serif;letter-spacing:-0.221px;color:#fafafa;white-space:nowrap;">Trigger</div><div style="position:absolute;left:508px;top:61px;width:784px;height:132px;box-sizing:border-box;border:1px solid #27272a;border-radius:8px"></div><svg style="position:absolute;left:518px;top:83px" width="20" height="20" viewBox="0 0 20 20" fill="none" stroke="#fafafa" stroke-width="1.6" stroke-linecap="round"><path d="M1.5 4.9 H12.2"/><circle cx="15.4" cy="4.7" r="2.6"/><path d="M5 4.9 V14.3 a1 1 0 0 0 1 1 H10.6"/><circle cx="13.05" cy="15.5" r="2.3"/></svg><div style="position:absolute;left:545.50px;top:83.29px;font:normal 17.5px/17.5px 'Liberation Sans', sans-serif;letter-spacing:0.318px;color:#fafafa;white-space:nowrap;-webkit-text-stroke:0.4px #fafafa">example_complex</div><div style="position:absolute;left:699px;top:85px;width:32px;height:16px;background:#2563eb;border-radius:8px"><div style="position:absolute;left:18px;top:2px;width:12px;height:12px;background:#fff;border-radius:50%;box-shadow:0 0 2px rgba(0,0,0,0.4)"></div></div><div style="position:absolute;left:1143px;top:70px;width:140px;height:40px;box-sizing:border-box;border:1px solid #27272a;border-radius:5px"></div><svg style="position:absolute;left:1160px;top:80px" width="20" height="20" viewBox="0 0 20 20" fill="none" stroke="#fafafa" stroke-width="1.4" stroke-linecap="round" stroke-linejoin="round"><path d="M9.3 18.3 H4 a0.5 0.5 0 0 1 -0.5 -0.5 V2.6 a0.5 0.5 0 0 1 0.5 -0.5 H15.7 a0.5 0.5 0 0 1 0.5 0.5 V10.6"/><path d="M6.3 5.5 H13.8 M6.3 8.4 H9.8"/><circle cx="13.2" cy="14.7" r="3.1"/></svg><div style="position:absolute;left:1188.90px;top:84.25px;font:normal 14px/14px 'Liberation Sans', sans-serif;letter-spacing:-0.599px;color:#fafafa;white-space:nowrap;">Reparse Dag</div><div style="position:absolute;left:517.20px;top:129.17px;font:bold 11.5px/11.5px 'Liberation Sans', sans-serif;letter-spacing:-0.332px;color:#a1a1aa;white-space:nowrap;">Schedule</div><div style="position:absolute;left:593.60px;top:129.17px;font:bold 11.5px/11.5px 'Liberation Sans', sans-serif;letter-spacing:-0.369px;color:#a1a1aa;white-space:nowrap;">Latest Run</div><div style="position:absolute;left:798.80px;top:129.17px;font:bold 11.5px/11.5px 'Liberation Sans', sans-serif;letter-spacing:-0.040px;color:#a1a1aa;white-space:nowrap;">Next Run</div><div style="position:absolute;left:876.60px;top:129.17px;font:bold 11.5px/11.5px 'Liberation Sans', sans-serif;letter-spacing:-0.121px;color:#a1a1aa;white-space:nowrap;">Owner</div><div style="position:absolute;left:951.00px;top:129.17px;font:bold 11.5px/11.5px 'Liberation Sans', sans-serif;letter-spacing:-0.895px;color:#a1a1aa;white-space:nowrap;">Tags</div><div style="position:absolute;left:1181.80px;top:129.17px;font:bold 11.5px/11.5px 'Liberation Sans', sans-serif;letter-spacing:-0.161px;color:#a1a1aa;white-space:nowrap;">Latest Dag Version</div><div style="position:absolute;left:593.70px;top:157.88px;font:normal 15.5px/15.5px 'Liberation Sans', sans-serif;letter-spacing:-0.049px;color:#fafafa;white-space:nowrap;">2025-04-21, 18:50:57</div><div style="position:absolute;left:750px;top:153px;width:22px;height:22px;background:#dc2626;border-radius:50%"><svg style="position:absolute;left:0;top:0" width="22" height="22" viewBox="0 0 22 22" fill="none" stroke="#fff" stroke-width="1.3" stroke-linecap="round"><path d="M7.4 7.4 L14.6 14.6 M14.6 7.4 L7.4 14.6"/></svg></div><div style="position:absolute;left:876.70px;top:157.56px;font:normal 16px/16px 'Liberation Sans', sans-serif;letter-spacing:0.070px;color:#fafafa;white-space:nowrap;">airflow</div><svg style="position:absolute;left:949.5px;top:154.8px" width="16.2" height="16.2" viewBox="0 0 24 24" fill="none" stroke="#fafafa" stroke-width="2" stroke-linecap="round" stroke-linejoin="round"><path d="M12.586 2.586A2 2 0 0 0 11.172 2H4a2 2 0 0 0-2 2v7.172a2 2 0 0 0 .586 1.414l8.704 8.704a2.426 2.426 0 0 0 3.42 0l6.58-6.58a2.426 2.426 0 0 0 0-3.42z"/><circle cx="7.5" cy="7.5" r=".5" fill="#fafafa"/></svg><div style="position:absolute;left:970.70px;top:156.95px;font:normal 14px/14px 'Liberation Sans', sans-serif;letter-spacing:-0.222px;color:#fafafa;white-space:nowrap;">example3, example, example2</div><div style="position:absolute;left:1181.80px;top:158.10px;font:normal 15px/15px 'Liberation Sans', sans-serif;letter-spacing:-0.940px;color:#fafafa;white-space:nowrap;">v1</div><div style="position:absolute;left:500px;top:237px;width:792px;height:1px;background:#27272a"></div><div style="position:absolute;left:516.50px;top:211.16px;font:bold 16px/16px 'Liberation Sans', sans-serif;letter-spacing:-0.156px;color:#a1a1aa;white-space:nowrap;">Overview</div><div style="position:absolute;left:619.70px;top:211.16px;font:bold 16px/16px 'Liberation Sans', sans-serif;letter-spacing:-1.466px;color:#a1a1aa;white-space:nowrap;">Runs</div><div style="position:absolute;left:688.20px;top:211.16px;font:bold 16px/16px 'Liberation Sans', sans-serif;letter-spacing:-1.319px;color:#a1a1aa;white-space:nowrap;">Tasks</div><div style="position:absolute;left:760.60px;top:211.16px;font:bold 16px/16px 'Liberation Sans', sans-serif;letter-spacing:-1.013px;color:#a1a1aa;white-space:nowrap;">Events</div><div style="position:absolute;left:840.60px;top:211.16px;font:bold 16px/16px 'Liberation Sans', sans-serif;letter-spacing:-0.799px;color:#fafafa;white-space:nowrap;">Code</div><div style="position:absolute;left:911.20px;top:211.16px;font:bold 16px/16px 'Liberation Sans', sans-serif;letter-spacing:-0.311px;color:#a1a1aa;white-space:nowrap;">Details</div><div style="position:absolute;left:824px;top:236px;width:70px;height:3px;background:#60a5fa"></div><div style="position:absolute;left:508px;top:246px;width:776px;height:481px;background:#282c34;overflow:hidden"><div style="position:absolute;left:0;top:0.6px;font:12.85px/21px 'Liberation Mono', monospace;color:#abb2bf"><div style="position:absolute;left:0;top:0px;height:21px;width:2000px;white-space:pre"><span style="position:absolute;right:1954px;font-style:italic;color:#636d83">27</span><span style="position:absolute;left:59.3px"><span style="color:#c678dd">from</span><span style="color:#abb2bf"> airflow.sdk </span><span style="color:#c678dd">import</span><span style="color:#abb2bf"> DAG, chain</span></span></div><div style="position:absolute;left:0;top:21px;height:21px;width:2000px;white-space:pre"><span style="position:absolute;right:1954px;font-style:italic;color:#636d83">28</span><span style="position:absolute;left:59.3px"></span></div><div style="position:absolute;left:0;top:42px;height:21px;width:2000px;white-space:pre"><span style="position:absolute;right:1954px;font-style:italic;color:#636d83">29</span><span style="position:absolute;left:59.3px"><span style="color:#c678dd">with</span><span style="color:#abb2bf"> DAG(</span></span></div><div style="position:absolute;left:0;top:63px;height:21px;width:2000px;white-space:pre"><span style="position:absolute;right:1954px;font-style:italic;color:#636d83">30</span><span style="position:absolute;left:59.3px"><span style="color:#abb2bf">    dag_id</span><span style="color:#56b6c2">=</span><span style="color:#98c379">&quot;example_complex&quot;</span><span style="color:#abb2bf">,</span></span></div><div style="position:absolute;left:0;top:84px;height:21px;width:2000px;white-space:pre"><span style="position:absolute;right:1954px;font-style:italic;color:#636d83">31</span><span style="position:absolute;left:59.3px"><span style="color:#abb2bf">    schedule</span><span style="color:#56b6c2">=</span><span style="color:#d19a66">None</span><span style="color:#abb2bf">,</span></span></div><div style="position:absolute;left:0;top:105px;height:21px;width:2000px;white-space:pre"><span style="position:absolute;right:1954px;font-style:italic;color:#636d83">32</span><span style="position:absolute;left:59.3px"><span style="color:#abb2bf">    start_date</span><span style="color:#56b6c2">=</span><span style="color:#abb2bf">pendulum.datetime(</span><span style="color:#d19a66">2021</span><span style="color:#abb2bf">, </span><span style="color:#d19a66">1</span><span style="color:#abb2bf">, </span><span style="color:#d19a66">1</span><span style="color:#abb2bf">, tz</span><span style="color:#56b6c2">=</span><span style="color:#98c379">&quot;UTC&quot;</span><span style="color:#abb2bf">),</span></span></div><div style="position:absolute;left:0;top:126px;height:21px;width:2000px;white-space:pre"><span style="position:absolute;right:1954px;font-style:italic;color:#636d83">33</span><span style="position:absolute;left:59.3px"><span style="color:#abb2bf">    catchup</span><span style="color:#56b6c2">=</span><span style="color:#d19a66">False</span><span style="color:#abb2bf">,</span></span></div><div style="position:absolute;left:0;top:147px;height:21px;width:2000px;white-space:pre"><span style="position:absolute;right:1954px;font-style:italic;color:#636d83">34</span><span style="position:absolute;left:59.3px"><span style="color:#abb2bf">    tags</span><span style="color:#56b6c2">=</span><span style="color:#abb2bf">[</span><span style="color:#98c379">&quot;example&quot;</span><span style="color:#abb2bf">, </span><span style="color:#98c379">&quot;example2&quot;</span><span style="color:#abb2bf">, </span><span style="color:#98c379">&quot;example3&quot;</span><span style="color:#abb2bf">],</span></span></div><div style="position:absolute;left:0;top:168px;height:21px;width:2000px;white-space:pre"><span style="position:absolute;right:1954px;font-style:italic;color:#636d83">35</span><span style="position:absolute;left:59.3px"><span style="color:#abb2bf">) </span><span style="color:#c678dd">as</span><span style="color:#abb2bf"> dag:</span></span></div><div style="position:absolute;left:0;top:189px;height:21px;width:2000px;white-space:pre"><span style="position:absolute;right:1954px;font-style:italic;color:#636d83">36</span><span style="position:absolute;left:59.3px"><span style="color:#abb2bf">    </span><span style="color:#5c6370;font-style:italic"># Create</span></span></div><div style="position:absolute;left:0;top:210px;height:21px;width:2000px;white-space:pre"><span style="position:absolute;right:1954px;font-style:italic;color:#636d83">37</span><span style="position:absolute;left:59.3px"><span style="color:#abb2bf">    create_entry_group </span><span style="color:#56b6c2">=</span><span style="color:#abb2bf"> BashOperator(task_id</span><span style="color:#56b6c2">=</span><span style="color:#98c379">&quot;create_entry_group&quot;</span><span style="color:#abb2bf">, bash_command</span><span style="color:#56b6c2">=</span><span style="color:#98c379">&quot;echo create_entry_group&quot;</span><span style="color:#abb2bf">)</span></span></div><div style="position:absolute;left:0;top:231px;height:21px;width:2000px;white-space:pre"><span style="position:absolute;right:1954px;font-style:italic;color:#636d83">38</span><span style="position:absolute;left:59.3px"></span></div><div style="position:absolute;left:0;top:252px;height:21px;width:2000px;white-space:pre"><span style="position:absolute;right:1954px;font-style:italic;color:#636d83">39</span><span style="position:absolute;left:59.3px"><span style="color:#abb2bf">    create_entry_group_result </span><span style="color:#56b6c2">=</span><span style="color:#abb2bf"> BashOperator(</span></span></div><div style="position:absolute;left:0;top:273px;height:21px;width:2000px;white-space:pre"><span style="position:absolute;right:1954px;font-style:italic;color:#636d83">40</span><span style="position:absolute;left:59.3px"><span style="color:#abb2bf">        task_id</span><span style="color:#56b6c2">=</span><span style="color:#98c379">&quot;create_entry_group_result&quot;</span><span style="color:#abb2bf">, bash_command</span><span style="color:#56b6c2">=</span><span style="color:#98c379">&quot;echo create_entry_group_result&quot;</span></span></div><div style="position:absolute;left:0;top:294px;height:21px;width:2000px;white-space:pre"><span style="position:absolute;right:1954px;font-style:italic;color:#636d83">41</span><span style="position:absolute;left:59.3px"><span style="color:#abb2bf">    )</span></span></div><div style="position:absolute;left:0;top:315px;height:21px;width:2000px;white-space:pre"><span style="position:absolute;right:1954px;font-style:italic;color:#636d83">42</span><span style="position:absolute;left:59.3px"></span></div><div style="position:absolute;left:0;top:336px;height:21px;width:2000px;white-space:pre"><span style="position:absolute;right:1954px;font-style:italic;color:#636d83">43</span><span style="position:absolute;left:59.3px"><span style="color:#abb2bf">    create_entry_group_result2 </span><span style="color:#56b6c2">=</span><span style="color:#abb2bf"> BashOperator(</span></span></div><div style="position:absolute;left:0;top:357px;height:21px;width:2000px;white-space:pre"><span style="position:absolute;right:1954px;font-style:italic;color:#636d83">44</span><span style="position:absolute;left:59.3px"><span style="color:#abb2bf">        task_id</span><span style="color:#56b6c2">=</span><span style="color:#98c379">&quot;create_entry_group_result2&quot;</span><span style="color:#abb2bf">, bash_command</span><span style="color:#56b6c2">=</span><span style="color:#98c379">&quot;echo create_entry_group_result2&quot;</span></span></div><div style="position:absolute;left:0;top:378px;height:21px;width:2000px;white-space:pre"><span style="position:absolute;right:1954px;font-style:italic;color:#636d83">45</span><span style="position:absolute;left:59.3px"><span style="color:#abb2bf">    )</span></span></div><div style="position:absolute;left:0;top:399px;height:21px;width:2000px;white-space:pre"><span style="position:absolute;right:1954px;font-style:italic;color:#636d83">46</span><span style="position:absolute;left:59.3px"></span></div><div style="position:absolute;left:0;top:420px;height:21px;width:2000px;white-space:pre"><span style="position:absolute;right:1954px;font-style:italic;color:#636d83">47</span><span style="position:absolute;left:59.3px"><span style="color:#abb2bf">    create_entry_gcs </span><span style="color:#56b6c2">=</span><span style="color:#abb2bf"> BashOperator(task_id</span><span style="color:#56b6c2">=</span><span style="color:#98c379">&quot;create_entry_gcs&quot;</span><span style="color:#abb2bf">, bash_command</span><span style="color:#56b6c2">=</span><span style="color:#98c379">&quot;echo create_entry_gcs&quot;</span><span style="color:#abb2bf">)</span></span></div><div style="position:absolute;left:0;top:441px;height:21px;width:2000px;white-space:pre"><span style="position:absolute;right:1954px;font-style:italic;color:#636d83">48</span><span style="position:absolute;left:59.3px"></span></div><div style="position:absolute;left:0;top:462px;height:21px;width:2000px;white-space:pre"><span style="position:absolute;right:1954px;font-style:italic;color:#636d83">49</span><span style="position:absolute;left:59.3px"><span style="color:#abb2bf">    create_entry_gcs_result </span><span style="color:#56b6c2">=</span><span style="color:#abb2bf"> BashOperator(</span></span></div><div style="position:absolute;left:0;top:483px;height:21px;width:2000px;white-space:pre"><span style="position:absolute;right:1954px;font-style:italic;color:#636d83">50</span><span style="position:absolute;left:59.3px"><span style="color:#abb2bf">        task_id</span><span style="color:#56b6c2">=</span><span style="color:#98c379">&quot;create_entry_gcs_result&quot;</span><span style="color:#abb2bf">, bash_command</span><span style="color:#56b6c2">=</span><span style="color:#98c379">&quot;echo create_entry_gcs_result&quot;</span></span></div></div></div>
</div>
</body></html>
